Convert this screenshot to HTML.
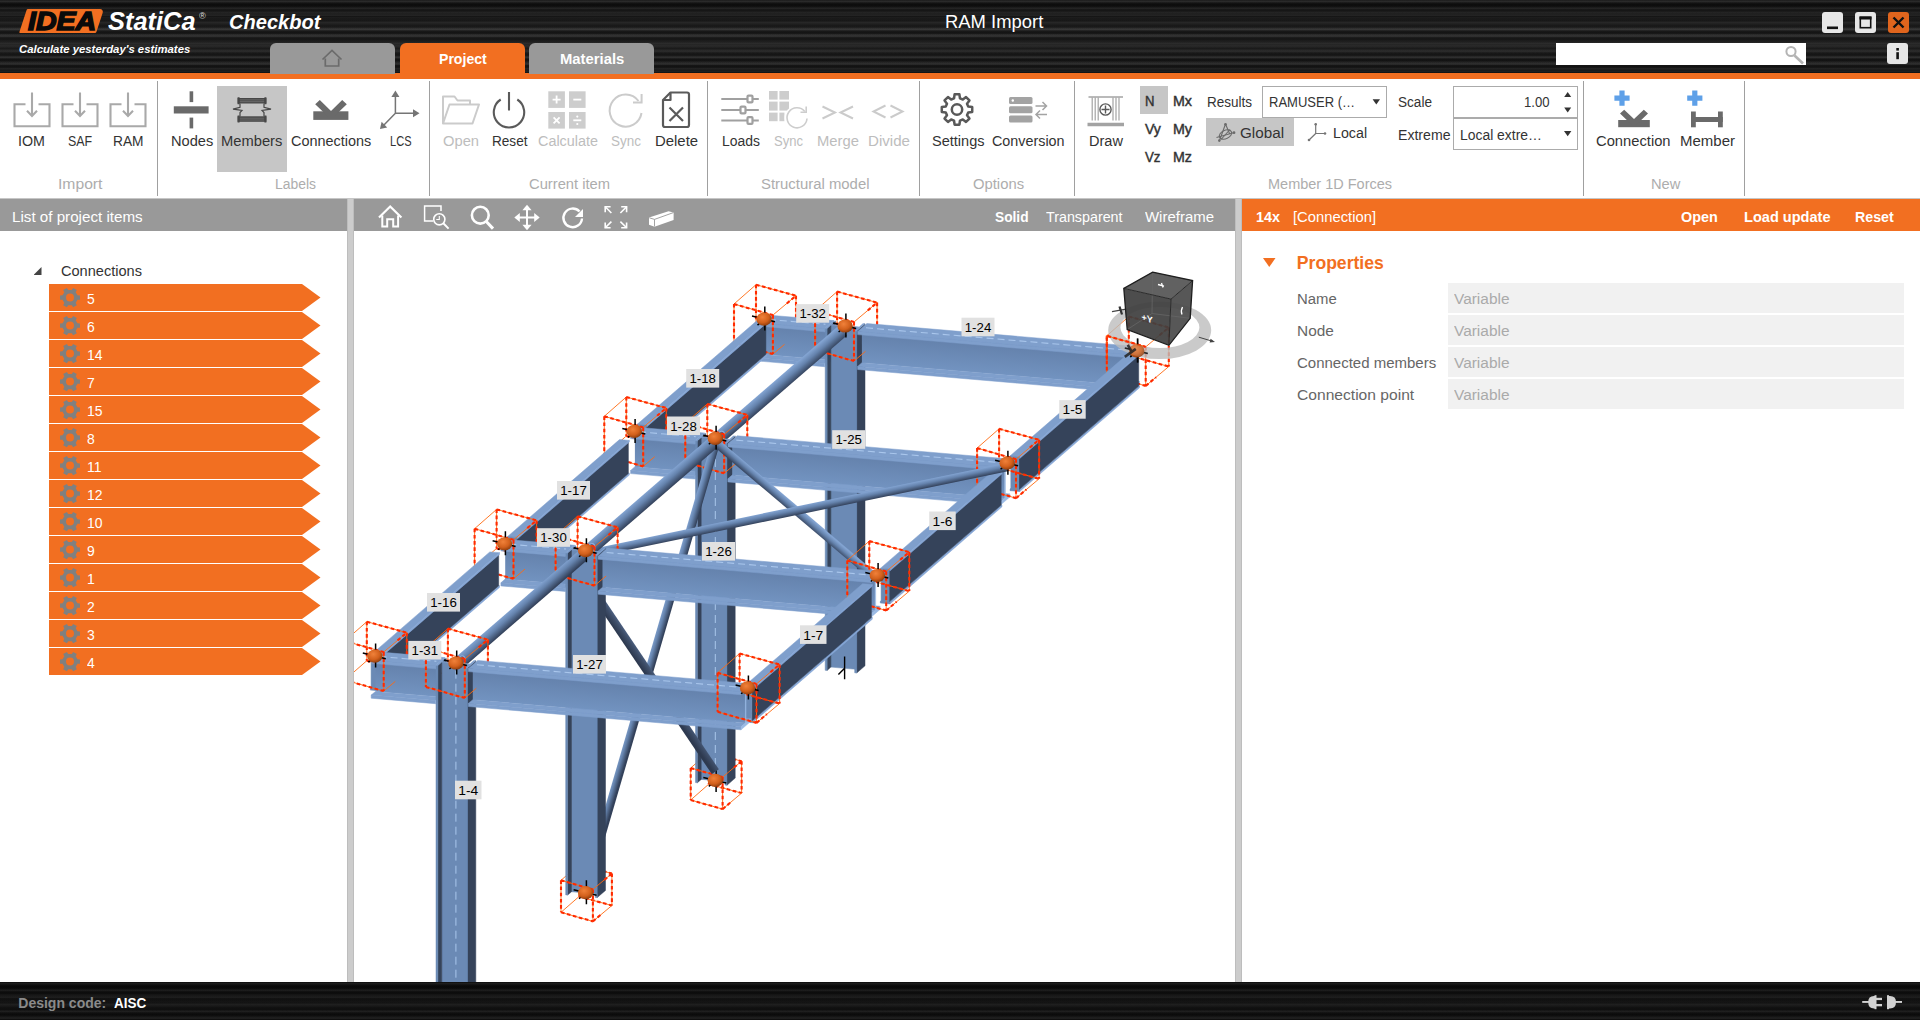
<!DOCTYPE html>
<html lang="en"><head><meta charset="utf-8"><title>RAM Import - IDEA StatiCa Checkbot</title>
<style>
*{margin:0;padding:0;box-sizing:border-box}
html,body{width:1920px;height:1020px;overflow:hidden;background:#fff}
body{font-family:"Liberation Sans",sans-serif;position:relative}
.t{position:absolute;white-space:nowrap;line-height:1;transform-origin:0 50%;display:block}
.a{position:absolute}
#title{left:0;top:0;width:1920px;height:73px;background:#101010;
 background-image:repeating-linear-gradient(180deg,rgba(255,255,255,0) 0,rgba(255,255,255,.075) 1.2px,rgba(255,255,255,0) 2.6px,rgba(0,0,0,.25) 4px,rgba(255,255,255,0) 7px),
 repeating-linear-gradient(180deg,rgba(255,255,255,0) 0,rgba(255,255,255,.06) 2px,rgba(255,255,255,0) 5px,rgba(255,255,255,.03) 8px,rgba(255,255,255,0) 11px),
 repeating-linear-gradient(180deg,rgba(255,255,255,.05) 0,rgba(255,255,255,0) 3px,rgba(255,255,255,0) 9px,rgba(255,255,255,.07) 12px,rgba(255,255,255,0) 14px,rgba(255,255,255,0) 17px),
 linear-gradient(180deg,#0c0c0c 0,#181818 35%,#1a1a1a 65%,#101010 100%)}
#stripe{left:0;top:73px;width:1920px;height:6px;background:#F26F21}
#ribbon{left:0;top:79px;width:1920px;height:120px;background:#fff;border-bottom:1px solid #c6c6c6}
.sep{position:absolute;top:81px;height:115px;width:1px;background:#a0a0a0}
.tab{position:absolute;top:43px;height:31px;width:125px;border-radius:6px 6px 0 0;background:#999}
.wb{position:absolute;width:21px;height:21px;border-radius:3px;background:#e6e6e6}
.hl{position:absolute;background:#c6c6c6}
.box{position:absolute;background:#fff;border:1px solid #ababab}
.hdr{position:absolute;top:199.4px;height:31.3px;background:#999}
.split{position:absolute;top:199px;width:7px;height:784px;background:#ccc;border-left:1px solid #bdbdbd;border-right:1px solid #bdbdbd}
#status{left:0;top:982px;width:1920px;height:38px;background:#0d0d0d;
 background-image:repeating-linear-gradient(180deg,rgba(255,255,255,0) 0,rgba(255,255,255,.06) 1.2px,rgba(255,255,255,0) 2.6px,rgba(0,0,0,.25) 4px,rgba(255,255,255,0) 7px),
 repeating-linear-gradient(180deg,rgba(255,255,255,0) 0,rgba(255,255,255,.05) 2px,rgba(255,255,255,0) 5px,rgba(255,255,255,.025) 8px,rgba(255,255,255,0) 11px),
 linear-gradient(180deg,#080808 0,#121212 50%,#0c0c0c 100%)}
.fld{position:absolute;left:1448px;width:456px;height:30px;background:#f1f1f1}
.row{position:absolute;left:49px;width:272px;height:27px;background:#F26F21;clip-path:polygon(0 0,253px 0,271.5px 13.5px,253px 27px,0 27px)}
</style></head>
<body>
<div id="title" class="a"></div><div id="stripe" class="a"></div><div id="ribbon" class="a"></div>
<div class="tab" style="left:270px"></div><div class="tab" style="left:400px;background:#F26F21"></div><div class="tab" style="left:529px"></div>
<div class="a" style="left:23.4px;top:9.4px;width:76.5px;height:24px;background:#F26F21;transform:skewX(-18.2deg);border-radius:1px 4px 1px 1px"></div>
<span class="t" style="left:28.20px;top:8.47px;font-size:26.5px;color:#0a0a0a;font-weight:700;font-style:italic;transform:scaleX(1.0777);-webkit-text-stroke:1.5px #0a0a0a;">IDEA</span>
<span class="t" style="left:107.50px;top:9.44px;font-size:25px;color:#fff;font-weight:700;font-style:italic;transform:scaleX(1.0160);">StatiCa</span>
<span class="t" style="left:198.80px;top:11.68px;font-size:9px;color:#ddd;transform:scaleX(1.0264);">®</span>
<span class="t" style="left:228.75px;top:11.82px;font-size:20px;color:#fff;font-weight:700;font-style:italic;transform:scaleX(1.0041);">Checkbot</span>
<span class="t" style="left:18.75px;top:43.76px;font-size:11.8px;color:#fff;font-weight:700;font-style:italic;transform:scaleX(0.9628);">Calculate yesterday's estimates</span>
<span class="t" style="left:945.40px;top:14.30px;font-size:17.6px;color:#fff;transform:scaleX(1.0482);">RAM Import</span>
<span class="t" style="left:438.75px;top:51.05px;font-size:15px;color:#fff;font-weight:700;transform:scaleX(0.9386);">Project</span>
<span class="t" style="left:559.50px;top:51.05px;font-size:15px;color:#fff;font-weight:700;transform:scaleX(0.9885);">Materials</span>
<div class="wb" style="left:1822px;top:12px"></div><div class="wb" style="left:1855px;top:12px"></div><div class="wb" style="left:1888px;top:12px;background:#E0651D"></div><div class="wb" style="left:1887px;top:43px"></div>
<div class="a" style="left:1556px;top:43px;width:250px;height:22px;background:#fff"></div>
<div class="sep" style="left:157px"></div>
<div class="sep" style="left:429px"></div>
<div class="sep" style="left:707px"></div>
<div class="sep" style="left:919px"></div>
<div class="sep" style="left:1074px"></div>
<div class="sep" style="left:1583px"></div>
<div class="sep" style="left:1744px"></div>
<div class="hl" style="left:217px;top:86px;width:70px;height:86px"></div>
<div class="hl" style="left:1140px;top:86px;width:28px;height:28px"></div>
<div class="hl" style="left:1206px;top:118px;width:88px;height:28px"></div>
<div class="box" style="left:1262px;top:86px;width:125px;height:32px"></div>
<div class="box" style="left:1453px;top:86px;width:125px;height:32px"></div>
<div class="box" style="left:1453px;top:118px;width:125px;height:32px"></div>
<span class="t" style="left:18.40px;top:132.88px;font-size:15.5px;color:#333;transform:scaleX(0.9197);">IOM</span>
<span class="t" style="left:68.40px;top:132.88px;font-size:15.5px;color:#333;transform:scaleX(0.8000);">SAF</span>
<span class="t" style="left:112.50px;top:132.88px;font-size:15.5px;color:#333;transform:scaleX(0.8870);">RAM</span>
<span class="t" style="left:170.60px;top:132.88px;font-size:15.5px;color:#333;transform:scaleX(0.9430);">Nodes</span>
<span class="t" style="left:221.40px;top:132.88px;font-size:15.5px;color:#333;transform:scaleX(0.9501);">Members</span>
<span class="t" style="left:291.40px;top:132.88px;font-size:15.5px;color:#333;transform:scaleX(0.9312);">Connections</span>
<span class="t" style="left:389.50px;top:132.88px;font-size:15.5px;color:#333;transform:scaleX(0.7137);">LCS</span>
<span class="t" style="left:443.00px;top:132.88px;font-size:15.5px;color:#bdbdbd;transform:scaleX(0.9505);">Open</span>
<span class="t" style="left:491.50px;top:132.88px;font-size:15.5px;color:#333;transform:scaleX(0.8765);">Reset</span>
<span class="t" style="left:537.50px;top:132.88px;font-size:15.5px;color:#bdbdbd;transform:scaleX(0.9284);">Calculate</span>
<span class="t" style="left:611.00px;top:132.88px;font-size:15.5px;color:#bdbdbd;transform:scaleX(0.8696);">Sync</span>
<span class="t" style="left:654.50px;top:132.88px;font-size:15.5px;color:#333;transform:scaleX(0.9609);">Delete</span>
<span class="t" style="left:721.50px;top:132.88px;font-size:15.5px;color:#333;transform:scaleX(0.8994);">Loads</span>
<span class="t" style="left:773.50px;top:132.88px;font-size:15.5px;color:#bdbdbd;transform:scaleX(0.8406);">Sync</span>
<span class="t" style="left:816.50px;top:132.88px;font-size:15.5px;color:#bdbdbd;transform:scaleX(0.9545);">Merge</span>
<span class="t" style="left:867.50px;top:132.88px;font-size:15.5px;color:#bdbdbd;transform:scaleX(0.9739);">Divide</span>
<span class="t" style="left:931.50px;top:132.88px;font-size:15.5px;color:#333;transform:scaleX(0.9375);">Settings</span>
<span class="t" style="left:992.00px;top:132.88px;font-size:15.5px;color:#333;transform:scaleX(0.9250);">Conversion</span>
<span class="t" style="left:1089.00px;top:132.88px;font-size:15.5px;color:#333;transform:scaleX(0.9379);">Draw</span>
<span class="t" style="left:1596.00px;top:132.88px;font-size:15.5px;color:#333;transform:scaleX(0.9506);">Connection</span>
<span class="t" style="left:1680.00px;top:132.88px;font-size:15.5px;color:#333;transform:scaleX(0.9670);">Member</span>
<span class="t" style="left:57.50px;top:175.88px;font-size:15.5px;color:#adadad;transform:scaleX(1.0120);">Import</span>
<span class="t" style="left:274.70px;top:175.88px;font-size:15.5px;color:#adadad;transform:scaleX(0.8964);">Labels</span>
<span class="t" style="left:528.50px;top:175.88px;font-size:15.5px;color:#adadad;transform:scaleX(0.9501);">Current item</span>
<span class="t" style="left:760.50px;top:175.88px;font-size:15.5px;color:#adadad;transform:scaleX(0.9612);">Structural model</span>
<span class="t" style="left:972.50px;top:175.88px;font-size:15.5px;color:#adadad;transform:scaleX(0.9555);">Options</span>
<span class="t" style="left:1267.50px;top:175.88px;font-size:15.5px;color:#adadad;transform:scaleX(0.9350);">Member 1D Forces</span>
<span class="t" style="left:1650.50px;top:175.88px;font-size:15.5px;color:#adadad;transform:scaleX(0.9478);">New</span>
<span class="t" style="left:1144.50px;top:93.13px;font-size:15.2px;color:#333;transform:scaleX(0.8636);-webkit-text-stroke:.45px #333;">N</span>
<span class="t" style="left:1173.00px;top:93.13px;font-size:15.2px;color:#333;transform:scaleX(0.9383);-webkit-text-stroke:.45px #333;">Mx</span>
<span class="t" style="left:1144.50px;top:121.13px;font-size:15.2px;color:#333;transform:scaleX(0.9275);-webkit-text-stroke:.45px #333;">Vy</span>
<span class="t" style="left:1173.00px;top:121.13px;font-size:15.2px;color:#333;transform:scaleX(0.9383);-webkit-text-stroke:.45px #333;">My</span>
<span class="t" style="left:1144.50px;top:149.13px;font-size:15.2px;color:#333;transform:scaleX(0.8732);-webkit-text-stroke:.45px #333;">Vz</span>
<span class="t" style="left:1173.00px;top:149.13px;font-size:15.2px;color:#333;transform:scaleX(0.9383);-webkit-text-stroke:.45px #333;">Mz</span>
<span class="t" style="left:1206.50px;top:94.38px;font-size:15.5px;color:#333;transform:scaleX(0.8717);">Results</span>
<span class="t" style="left:1268.50px;top:94.38px;font-size:15.5px;color:#333;transform:scaleX(0.8390);">RAMUSER (…</span>
<span class="t" style="left:1397.50px;top:94.38px;font-size:15.5px;color:#333;transform:scaleX(0.8774);">Scale</span>
<span class="t" style="left:1523.50px;top:94.38px;font-size:15.5px;color:#333;transform:scaleX(0.8465);">1.00</span>
<span class="t" style="left:1240.00px;top:124.88px;font-size:15.5px;color:#333;transform:scaleX(0.9832);">Global</span>
<span class="t" style="left:1332.50px;top:124.88px;font-size:15.5px;color:#333;transform:scaleX(0.9189);">Local</span>
<span class="t" style="left:1397.50px;top:126.88px;font-size:15.5px;color:#333;transform:scaleX(0.9091);">Extreme</span>
<span class="t" style="left:1459.50px;top:126.88px;font-size:15.5px;color:#333;transform:scaleX(0.8974);">Local extre…</span>
<div class="hdr" style="left:0;width:347px"></div><div class="hdr" style="left:354px;width:881px"></div>
<div class="hdr" style="left:1242px;width:678px;background:#F26F21"></div>
<div class="split" style="left:347px"></div><div class="split" style="left:1235px"></div>
<span class="t" style="left:12.40px;top:208.88px;font-size:15.5px;color:#fff;transform:scaleX(0.9783);">List of project items</span>
<span class="t" style="left:995.00px;top:209.30px;font-size:15px;color:#fff;font-weight:700;transform:scaleX(0.9147);">Solid</span>
<span class="t" style="left:1045.50px;top:208.88px;font-size:15.5px;color:#fff;transform:scaleX(0.9217);">Transparent</span>
<span class="t" style="left:1144.50px;top:208.88px;font-size:15.5px;color:#fff;transform:scaleX(0.9650);">Wireframe</span>
<span class="t" style="left:1255.50px;top:209.30px;font-size:15px;color:#fff;font-weight:700;transform:scaleX(0.9600);">14x</span>
<span class="t" style="left:1293.00px;top:208.88px;font-size:15.5px;color:#fff;transform:scaleX(0.9540);">[Connection]</span>
<span class="t" style="left:1680.80px;top:209.30px;font-size:15px;color:#fff;font-weight:700;transform:scaleX(0.9590);">Open</span>
<span class="t" style="left:1743.50px;top:209.30px;font-size:15px;color:#fff;font-weight:700;transform:scaleX(0.9705);">Load update</span>
<span class="t" style="left:1855.00px;top:209.30px;font-size:15px;color:#fff;font-weight:700;transform:scaleX(0.9468);">Reset</span>
<span class="t" style="left:60.90px;top:262.88px;font-size:15.5px;color:#333;transform:scaleX(0.9393);">Connections</span>
<div class="a" style="left:33.5px;top:267px;width:8px;height:8px;background:#444;clip-path:polygon(100% 0,100% 100%,0 100%)"></div>
<div class="row" style="top:284px"></div>
<span class="t" style="left:86.50px;top:290.68px;font-size:15.5px;color:#fff;transform:scaleX(.9);">5</span>
<div class="row" style="top:312px"></div>
<span class="t" style="left:86.50px;top:318.68px;font-size:15.5px;color:#fff;transform:scaleX(.9);">6</span>
<div class="row" style="top:340px"></div>
<span class="t" style="left:86.50px;top:346.68px;font-size:15.5px;color:#fff;transform:scaleX(.9);">14</span>
<div class="row" style="top:368px"></div>
<span class="t" style="left:86.50px;top:374.68px;font-size:15.5px;color:#fff;transform:scaleX(.9);">7</span>
<div class="row" style="top:396px"></div>
<span class="t" style="left:86.50px;top:402.68px;font-size:15.5px;color:#fff;transform:scaleX(.9);">15</span>
<div class="row" style="top:424px"></div>
<span class="t" style="left:86.50px;top:430.68px;font-size:15.5px;color:#fff;transform:scaleX(.9);">8</span>
<div class="row" style="top:452px"></div>
<span class="t" style="left:86.50px;top:458.68px;font-size:15.5px;color:#fff;transform:scaleX(.9);">11</span>
<div class="row" style="top:480px"></div>
<span class="t" style="left:86.50px;top:486.68px;font-size:15.5px;color:#fff;transform:scaleX(.9);">12</span>
<div class="row" style="top:508px"></div>
<span class="t" style="left:86.50px;top:514.68px;font-size:15.5px;color:#fff;transform:scaleX(.9);">10</span>
<div class="row" style="top:536px"></div>
<span class="t" style="left:86.50px;top:542.68px;font-size:15.5px;color:#fff;transform:scaleX(.9);">9</span>
<div class="row" style="top:564px"></div>
<span class="t" style="left:86.50px;top:570.68px;font-size:15.5px;color:#fff;transform:scaleX(.9);">1</span>
<div class="row" style="top:592px"></div>
<span class="t" style="left:86.50px;top:598.68px;font-size:15.5px;color:#fff;transform:scaleX(.9);">2</span>
<div class="row" style="top:620px"></div>
<span class="t" style="left:86.50px;top:626.68px;font-size:15.5px;color:#fff;transform:scaleX(.9);">3</span>
<div class="row" style="top:648px"></div>
<span class="t" style="left:86.50px;top:654.68px;font-size:15.5px;color:#fff;transform:scaleX(.9);">4</span>
<span class="t" style="left:1296.80px;top:255.10px;font-size:17.6px;color:#F26F21;font-weight:700;">Properties</span>
<div class="a" style="left:1263px;top:258px;width:12.5px;height:9px;background:#F26F21;clip-path:polygon(0 0,100% 0,50% 100%)"></div>
<div class="fld" style="top:283px"></div>
<span class="t" style="left:1296.80px;top:290.88px;font-size:15.5px;color:#666;transform:scaleX(0.9595);">Name</span>
<span class="t" style="left:1454.30px;top:290.88px;font-size:15.5px;color:#aaa;transform:scaleX(0.9955);">Variable</span>
<div class="fld" style="top:315px"></div>
<span class="t" style="left:1296.80px;top:322.88px;font-size:15.5px;color:#666;transform:scaleX(0.9946);">Node</span>
<span class="t" style="left:1454.30px;top:322.88px;font-size:15.5px;color:#aaa;transform:scaleX(0.9955);">Variable</span>
<div class="fld" style="top:347px"></div>
<span class="t" style="left:1296.80px;top:354.88px;font-size:15.5px;color:#666;transform:scaleX(0.9675);">Connected members</span>
<span class="t" style="left:1454.30px;top:354.88px;font-size:15.5px;color:#aaa;transform:scaleX(0.9955);">Variable</span>
<div class="fld" style="top:379px"></div>
<span class="t" style="left:1296.80px;top:386.88px;font-size:15.5px;color:#666;transform:scaleX(1.0071);">Connection point</span>
<span class="t" style="left:1454.30px;top:386.88px;font-size:15.5px;color:#aaa;transform:scaleX(0.9955);">Variable</span>
<div id="status" class="a"></div>
<span class="t" style="left:18.30px;top:995.65px;font-size:14px;color:#8a8a8a;font-weight:700;">Design code:</span>
<span class="t" style="left:113.50px;top:995.65px;font-size:14px;color:#fff;font-weight:700;transform:scaleX(0.9642);">AISC</span>
<svg class="a" style="left:0;top:0" width="1920" height="1020" viewBox="0 0 1920 1020" font-family="Liberation Sans, sans-serif"><defs><radialGradient id="sph" cx=".4" cy=".35" r=".75"><stop offset="0" stop-color="#F0813A"/><stop offset=".55" stop-color="#D2601C"/><stop offset="1" stop-color="#7A3208"/></radialGradient><linearGradient id="fg1" gradientUnits="userSpaceOnUse" x1="764.7" y1="354.4" x2="767.4" y2="322.8"><stop offset="0" stop-color="#7293C0"/><stop offset="1" stop-color="#6380AA"/></linearGradient><linearGradient id="fg2" gradientUnits="userSpaceOnUse" x1="861.9" y1="362.7" x2="864.6" y2="331.0"><stop offset="0" stop-color="#7293C0"/><stop offset="1" stop-color="#6380AA"/></linearGradient><linearGradient id="tg3" gradientUnits="userSpaceOnUse" x1="716.3" y1="431.6" x2="724.6" y2="441.3"><stop offset="0" stop-color="#82A3D1"/><stop offset=".42" stop-color="#6583AD"/><stop offset="1" stop-color="#33415A"/></linearGradient><linearGradient id="fg4" gradientUnits="userSpaceOnUse" x1="634.9" y1="466.7" x2="637.6" y2="435.1"><stop offset="0" stop-color="#7293C0"/><stop offset="1" stop-color="#6380AA"/></linearGradient><linearGradient id="fg5" gradientUnits="userSpaceOnUse" x1="732.2" y1="475.0" x2="734.9" y2="443.4"><stop offset="0" stop-color="#7293C0"/><stop offset="1" stop-color="#6380AA"/></linearGradient><linearGradient id="tg6" gradientUnits="userSpaceOnUse" x1="711.3" y1="442.9" x2="719.4" y2="445.3"><stop offset="0" stop-color="#82A3D1"/><stop offset=".42" stop-color="#6583AD"/><stop offset="1" stop-color="#33415A"/></linearGradient><linearGradient id="tg7" gradientUnits="userSpaceOnUse" x1="589.2" y1="577.1" x2="582.1" y2="582.0"><stop offset="0" stop-color="#4E6283"/><stop offset=".42" stop-color="#3E4E69"/><stop offset="1" stop-color="#2E3A50"/></linearGradient><linearGradient id="tg8" gradientUnits="userSpaceOnUse" x1="718.1" y1="439.0" x2="712.6" y2="445.4"><stop offset="0" stop-color="#82A3D1"/><stop offset=".42" stop-color="#6583AD"/><stop offset="1" stop-color="#33415A"/></linearGradient><linearGradient id="tg9" gradientUnits="userSpaceOnUse" x1="584.8" y1="550.4" x2="586.5" y2="558.6"><stop offset="0" stop-color="#82A3D1"/><stop offset=".42" stop-color="#6583AD"/><stop offset="1" stop-color="#33415A"/></linearGradient><linearGradient id="tg10" gradientUnits="userSpaceOnUse" x1="586.5" y1="543.9" x2="594.9" y2="553.6"><stop offset="0" stop-color="#82A3D1"/><stop offset=".42" stop-color="#6583AD"/><stop offset="1" stop-color="#33415A"/></linearGradient><linearGradient id="fg11" gradientUnits="userSpaceOnUse" x1="505.2" y1="579.0" x2="507.9" y2="547.4"><stop offset="0" stop-color="#7293C0"/><stop offset="1" stop-color="#6380AA"/></linearGradient><linearGradient id="fg12" gradientUnits="userSpaceOnUse" x1="602.5" y1="587.3" x2="605.2" y2="555.7"><stop offset="0" stop-color="#7293C0"/><stop offset="1" stop-color="#6380AA"/></linearGradient><linearGradient id="tg13" gradientUnits="userSpaceOnUse" x1="456.8" y1="656.3" x2="465.2" y2="665.9"><stop offset="0" stop-color="#82A3D1"/><stop offset=".42" stop-color="#6583AD"/><stop offset="1" stop-color="#33415A"/></linearGradient><linearGradient id="fg14" gradientUnits="userSpaceOnUse" x1="375.5" y1="691.4" x2="378.2" y2="659.7"><stop offset="0" stop-color="#7293C0"/><stop offset="1" stop-color="#6380AA"/></linearGradient><linearGradient id="fg15" gradientUnits="userSpaceOnUse" x1="472.8" y1="699.7" x2="475.5" y2="668.0"><stop offset="0" stop-color="#7293C0"/><stop offset="1" stop-color="#6380AA"/></linearGradient><linearGradient id="webg" x1="0" y1="0" x2="1" y2=".35"><stop offset="0" stop-color="#6C8BB7"/><stop offset=".35" stop-color="#7091BE"/><stop offset="1" stop-color="#6482AC"/></linearGradient><clipPath id="vp"><rect x="354" y="231" width="881" height="751"/></clipPath></defs><g clip-path="url(#vp)"><path d="M756.0 284.7L734.0 304.0M756.0 284.7L796.0 295.7M756.0 284.7L756.0 323.7M756.0 323.7L734.0 343.0M756.0 323.7L796.0 334.7M796.0 295.7L796.0 334.7" stroke="#FF6A10" stroke-width=".9" fill="none"/>
<path d="M756.0 284.7L796.0 295.7M756.0 284.7L756.0 323.7M756.0 323.7L796.0 334.7M796.0 295.7L796.0 334.7" stroke="#FF2A00" stroke-width="2.1" stroke-dasharray="3.6 2.6" fill="none"/>
<path d="M837.1 291.6L815.1 310.9M837.1 291.6L877.1 302.6M837.1 291.6L837.1 330.6M837.1 330.6L815.1 349.9M837.1 330.6L877.1 341.6M877.1 302.6L877.1 341.6" stroke="#FF6A10" stroke-width=".9" fill="none"/>
<path d="M837.1 291.6L877.1 302.6M837.1 291.6L837.1 330.6M837.1 330.6L877.1 341.6M877.1 302.6L877.1 341.6" stroke="#FF2A00" stroke-width="2.1" stroke-dasharray="3.6 2.6" fill="none"/>
<path d="M1128.8 316.5L1106.8 335.8M1128.8 316.5L1168.8 327.5M1128.8 316.5L1128.8 355.5M1128.8 355.5L1106.8 374.8M1128.8 355.5L1168.8 366.5" stroke="#FF6A10" stroke-width=".9" fill="none"/>
<path d="M1128.8 316.5L1168.8 327.5M1128.8 316.5L1128.8 355.5M1128.8 355.5L1168.8 366.5" stroke="#FF2A00" stroke-width="2.1" stroke-dasharray="3.6 2.6" fill="none"/>
<polygon points="765.3,353.9 769.6,350.1 834.0,355.6 829.6,359.4" fill="#7F9FCC" stroke="#7F9FCC" stroke-width=".5"/>
<polygon points="764.7,354.4 764.7,322.5 829.0,328.0 829.0,359.9" fill="url(#fg1)"/>
<polygon points="760.3,358.2 764.7,354.4 829.0,359.9 824.7,363.6" fill="#7F9FCC" stroke="#7F9FCC" stroke-width=".5"/>
<polygon points="760.3,323.2 769.6,315.2 834.0,320.6 824.7,328.7" fill="#7F9FCC" stroke="#7F9FCC" stroke-width=".5"/>
<polygon points="760.3,361.2 760.3,358.2 824.7,363.6 824.7,366.7" fill="#7F9FCC" stroke="#7F9FCC" stroke-width=".5"/>
<polygon points="834.0,358.7 824.7,366.7 824.7,363.6 829.0,359.9 829.0,328.0 824.7,331.8 824.7,328.7 834.0,320.6 834.0,323.7 829.6,327.5 829.6,359.4 834.0,355.6" fill="#9BBAE4" stroke="#9BBAE4" stroke-width=".5"/>
<polygon points="760.3,326.3 760.3,323.2 824.7,328.7 824.7,331.8" fill="#7F9FCC" stroke="#7F9FCC" stroke-width=".5"/>
<line x1="768.8" y1="319.5" x2="825.5" y2="324.3" stroke="#A9C6EC" stroke-width="1.1" stroke-dasharray="7 4"/>
<polygon points="835.4,663.3 831.5,666.6 831.5,324.6 835.4,321.2" fill="#35435A" stroke="#35435A" stroke-width=".5"/>
<polygon points="858.6,669.5 830.9,667.1 830.9,325.1 858.6,327.5" fill="#6B8AB5" stroke="#6B8AB5" stroke-width=".5"/>
<polygon points="830.9,667.1 827.1,670.4 827.1,328.4 830.9,325.1" fill="#35435A" stroke="#35435A" stroke-width=".5"/>
<polygon points="865.0,665.8 856.7,673.0 856.7,331.0 865.0,323.8" fill="#35435A" stroke="#35435A" stroke-width=".5"/>
<polygon points="827.1,670.4 825.2,670.3 825.2,328.3 827.1,328.4" fill="#6B8AB5" stroke="#6B8AB5" stroke-width=".5"/>
<polygon points="856.7,673.0 854.7,672.8 854.7,330.8 856.7,331.0" fill="#6B8AB5" stroke="#6B8AB5" stroke-width=".5"/>
<polygon points="825.2,328.3 833.5,321.1 835.4,321.2 831.5,324.6 859.2,326.9 863.0,323.6 865.0,323.8 856.7,331.0 854.7,330.8 858.6,327.5 830.9,325.1 827.1,328.4" fill="#7F9FCC" stroke="#7F9FCC" stroke-width=".5"/>
<polygon points="862.5,362.2 866.9,358.4 1139.5,381.6 1135.2,385.4" fill="#7F9FCC" stroke="#7F9FCC" stroke-width=".5"/>
<polygon points="861.9,362.7 861.9,330.8 1134.6,354.1 1134.6,385.9" fill="url(#fg2)"/>
<polygon points="857.6,366.4 861.9,362.7 1134.6,385.9 1130.2,389.7" fill="#7F9FCC" stroke="#7F9FCC" stroke-width=".5"/>
<polygon points="857.6,331.5 866.9,323.5 1139.5,346.7 1130.2,354.7" fill="#7F9FCC" stroke="#7F9FCC" stroke-width=".5"/>
<polygon points="857.6,369.5 857.6,366.4 1130.2,389.7 1130.2,392.8" fill="#7F9FCC" stroke="#7F9FCC" stroke-width=".5"/>
<polygon points="857.6,334.6 857.6,331.5 1130.2,354.7 1130.2,357.8" fill="#7F9FCC" stroke="#7F9FCC" stroke-width=".5"/>
<polygon points="1139.5,384.7 1130.2,392.8 1130.2,389.7 1134.6,385.9 1134.6,354.1 1130.2,357.8 1130.2,354.7 1139.5,346.7 1139.5,349.8 1135.2,353.5 1135.2,385.4 1139.5,381.6" fill="#9BBAE4" stroke="#9BBAE4" stroke-width=".5"/>
<line x1="866.0" y1="327.8" x2="1131.1" y2="350.4" stroke="#A9C6EC" stroke-width="1.1" stroke-dasharray="7 4"/>
<path d="M734.0 304.0L772.9 315.1M772.9 315.1L796.0 295.7M734.0 304.0L734.0 343.0M772.9 315.1L772.9 354.1M734.0 343.0L772.9 354.1M772.9 354.1L784.5 344.4" stroke="#FF6A10" stroke-width=".9" fill="none"/>
<path d="M734.0 304.0L772.9 315.1M734.0 304.0L734.0 343.0M772.9 315.1L772.9 354.1M734.0 343.0L772.9 354.1M786.8 303.5L796.0 295.7" stroke="#FF2A00" stroke-width="2.1" stroke-dasharray="3.6 2.6" fill="none"/>
<path d="M815.1 310.9L854.0 322.0M854.0 322.0L877.1 302.6M815.1 310.9L815.1 349.9M854.0 322.0L854.0 361.0M815.1 349.9L854.0 361.0M854.0 361.0L865.5 351.3" stroke="#FF6A10" stroke-width=".9" fill="none"/>
<path d="M815.1 310.9L854.0 322.0M815.1 310.9L815.1 349.9M854.0 322.0L854.0 361.0M815.1 349.9L854.0 361.0M867.8 310.4L877.1 302.6" stroke="#FF2A00" stroke-width="2.1" stroke-dasharray="3.6 2.6" fill="none"/>
<path d="M1106.8 335.8L1145.7 346.9M1145.7 346.9L1168.8 327.5M1106.8 335.8L1106.8 374.8M1145.7 346.9L1145.7 385.9M1106.8 374.8L1145.7 385.9M1145.7 385.9L1168.8 366.5M1168.8 327.5L1168.8 366.5" stroke="#FF6A10" stroke-width=".9" fill="none"/>
<path d="M1106.8 335.8L1145.7 346.9M1106.8 335.8L1106.8 374.8M1145.7 346.9L1145.7 385.9M1106.8 374.8L1145.7 385.9M1168.8 327.5L1168.8 366.5M1159.5 335.2L1168.8 327.5M1145.7 385.9L1156.1 377.2" stroke="#FF2A00" stroke-width="2.1" stroke-dasharray="3.6 2.6" fill="none"/>
<path d="M844.6 656.5V679.2M838.4 674.5L844.6 668.2" stroke="#000" stroke-width="1.4" fill="none"/>
<polygon points="638.1,457.4 637.2,457.3 757.1,353.5 757.9,353.6" fill="#7F9FCC" stroke="#7F9FCC" stroke-width=".5"/>
<polygon points="646.9,459.8 646.9,458.1 766.8,354.4 766.8,356.0" fill="#86A7D6" stroke="#86A7D6" stroke-width=".5"/>
<polygon points="646.9,458.1 646.1,458.0 765.9,354.3 766.8,354.4" fill="#7F9FCC" stroke="#7F9FCC" stroke-width=".5"/>
<polygon points="646.1,458.0 646.1,426.7 765.9,322.9 765.9,354.3" fill="#35435A" stroke="#35435A" stroke-width=".5"/>
<polygon points="646.9,425.1 637.2,424.3 757.1,320.5 766.8,321.3" fill="#7F9FCC" stroke="#7F9FCC" stroke-width=".5"/>
<polygon points="646.9,426.7 646.9,425.1 766.8,321.3 766.8,323.0" fill="#86A7D6" stroke="#86A7D6" stroke-width=".5"/>
<polygon points="637.2,458.9 646.9,459.8 646.9,458.1 646.1,458.0 646.1,426.7 646.9,426.7 646.9,425.1 637.2,424.3 637.2,425.9 638.1,426.0 638.1,457.4 637.2,457.3" fill="#6B8AB5" stroke="#6B8AB5" stroke-width=".5"/>
<polygon points="1010.8,489.1 1010.0,489.1 1129.8,385.3 1130.7,385.4" fill="#7F9FCC" stroke="#7F9FCC" stroke-width=".5"/>
<polygon points="1019.7,491.5 1019.7,489.9 1139.5,386.1 1139.5,387.8" fill="#86A7D6" stroke="#86A7D6" stroke-width=".5"/>
<polygon points="1019.7,489.9 1018.9,489.8 1138.7,386.1 1139.5,386.1" fill="#7F9FCC" stroke="#7F9FCC" stroke-width=".5"/>
<polygon points="1018.9,489.8 1018.9,458.4 1138.7,354.7 1138.7,386.1" fill="#35435A" stroke="#35435A" stroke-width=".5"/>
<polygon points="1019.7,456.9 1010.0,456.0 1129.8,352.3 1139.5,353.1" fill="#7F9FCC" stroke="#7F9FCC" stroke-width=".5"/>
<polygon points="1019.7,458.5 1019.7,456.9 1139.5,353.1 1139.5,354.8" fill="#86A7D6" stroke="#86A7D6" stroke-width=".5"/>
<polygon points="1010.0,490.7 1019.7,491.5 1019.7,489.9 1018.9,489.8 1018.9,458.4 1019.7,458.5 1019.7,456.9 1010.0,456.0 1010.0,457.7 1010.8,457.8 1010.8,489.1 1010.0,489.1" fill="#6B8AB5" stroke="#6B8AB5" stroke-width=".5"/>
<polygon points="716.3,431.6 838.5,325.8 846.9,335.4 724.6,441.3" fill="url(#tg3)"/>
<ellipse cx="720.4" cy="436.4" rx="3.6" ry="5.6" transform="rotate(28 720.4 436.4)" fill="#50658A" stroke="#8FB0DE" stroke-width="1.2"/>
<path d="M626.3 397.0L604.3 416.3M626.3 397.0L666.3 408.0M626.3 397.0L626.3 436.0M626.3 436.0L604.3 455.3M626.3 436.0L666.3 447.0M666.3 408.0L666.3 447.0" stroke="#FF6A10" stroke-width=".9" fill="none"/>
<path d="M626.3 397.0L666.3 408.0M626.3 397.0L626.3 436.0M626.3 436.0L666.3 447.0M666.3 408.0L666.3 447.0" stroke="#FF2A00" stroke-width="2.1" stroke-dasharray="3.6 2.6" fill="none"/>
<path d="M707.3 403.9L685.3 423.2M707.3 403.9L747.3 414.9M707.3 403.9L707.3 442.9M707.3 442.9L685.3 462.2M707.3 442.9L747.3 453.9M747.3 414.9L747.3 453.9" stroke="#FF6A10" stroke-width=".9" fill="none"/>
<path d="M707.3 403.9L747.3 414.9M707.3 403.9L707.3 442.9M707.3 442.9L747.3 453.9M747.3 414.9L747.3 453.9" stroke="#FF2A00" stroke-width="2.1" stroke-dasharray="3.6 2.6" fill="none"/>
<path d="M999.1 428.8L977.1 448.1M999.1 428.8L1039.1 439.8M999.1 428.8L999.1 467.8M999.1 467.8L977.1 487.1M999.1 467.8L1039.1 478.8" stroke="#FF6A10" stroke-width=".9" fill="none"/>
<path d="M999.1 428.8L1039.1 439.8M999.1 428.8L999.1 467.8M999.1 467.8L1039.1 478.8" stroke="#FF2A00" stroke-width="2.1" stroke-dasharray="3.6 2.6" fill="none"/>
<path d="M708.8 752.1L690.7 768.0M708.8 752.1L741.6 761.2M708.8 752.1L708.8 784.1M708.8 784.1L690.7 800.0M708.8 784.1L741.6 793.1" stroke="#FF6A10" stroke-width=".9" fill="none"/>
<path d="M708.8 752.1L741.6 761.2M708.8 752.1L708.8 784.1M708.8 784.1L741.6 793.1" stroke="#FF2A00" stroke-width="2.1" stroke-dasharray="3.6 2.6" fill="none"/>
<polygon points="635.5,466.2 639.9,462.4 704.3,467.9 699.9,471.7" fill="#7F9FCC" stroke="#7F9FCC" stroke-width=".5"/>
<polygon points="634.9,466.7 634.9,434.9 699.3,440.3 699.3,472.2" fill="url(#fg4)"/>
<polygon points="630.6,470.5 634.9,466.7 699.3,472.2 695.0,476.0" fill="#7F9FCC" stroke="#7F9FCC" stroke-width=".5"/>
<polygon points="630.6,435.5 639.9,427.5 704.3,433.0 695.0,441.0" fill="#7F9FCC" stroke="#7F9FCC" stroke-width=".5"/>
<polygon points="630.6,473.6 630.6,470.5 695.0,476.0 695.0,479.0" fill="#7F9FCC" stroke="#7F9FCC" stroke-width=".5"/>
<polygon points="704.3,471.0 695.0,479.0 695.0,476.0 699.3,472.2 699.3,440.3 695.0,444.1 695.0,441.0 704.3,433.0 704.3,436.1 699.9,439.8 699.9,471.7 704.3,467.9" fill="#9BBAE4" stroke="#9BBAE4" stroke-width=".5"/>
<polygon points="630.6,438.6 630.6,435.5 695.0,441.0 695.0,444.1" fill="#7F9FCC" stroke="#7F9FCC" stroke-width=".5"/>
<line x1="639.1" y1="431.8" x2="695.8" y2="436.7" stroke="#A9C6EC" stroke-width="1.1" stroke-dasharray="7 4"/>
<polygon points="705.7,775.6 701.8,778.9 701.8,436.9 705.7,433.6" fill="#35435A" stroke="#35435A" stroke-width=".5"/>
<polygon points="728.9,781.8 701.2,779.4 701.2,437.4 728.9,439.8" fill="#6B8AB5" stroke="#6B8AB5" stroke-width=".5"/>
<polygon points="701.2,779.4 697.4,782.8 697.4,440.8 701.2,437.4" fill="#35435A" stroke="#35435A" stroke-width=".5"/>
<polygon points="735.2,778.1 726.9,785.3 726.9,443.3 735.2,436.1" fill="#35435A" stroke="#35435A" stroke-width=".5"/>
<polygon points="697.4,782.8 695.5,782.6 695.5,440.6 697.4,440.8" fill="#6B8AB5" stroke="#6B8AB5" stroke-width=".5"/>
<polygon points="726.9,785.3 725.0,785.1 725.0,443.1 726.9,443.3" fill="#6B8AB5" stroke="#6B8AB5" stroke-width=".5"/>
<polygon points="695.5,440.6 703.8,433.4 705.7,433.6 701.8,436.9 729.5,439.3 733.3,435.9 735.2,436.1 726.9,443.3 725.0,443.1 728.9,439.8 701.2,437.4 697.4,440.8" fill="#7F9FCC" stroke="#7F9FCC" stroke-width=".5"/>
<line x1="715.3" y1="446.0" x2="715.3" y2="776.5" stroke="#A9C6EC" stroke-width="1.0" stroke-dasharray="8 5"/>
<polygon points="732.8,474.5 737.2,470.7 1009.8,494.0 1005.4,497.7" fill="#7F9FCC" stroke="#7F9FCC" stroke-width=".5"/>
<polygon points="732.2,475.0 732.2,443.1 1004.8,466.4 1004.8,498.3" fill="url(#fg5)"/>
<polygon points="727.9,478.8 732.2,475.0 1004.8,498.3 1000.5,502.0" fill="#7F9FCC" stroke="#7F9FCC" stroke-width=".5"/>
<polygon points="727.9,443.8 737.2,435.8 1009.8,459.0 1000.5,467.1" fill="#7F9FCC" stroke="#7F9FCC" stroke-width=".5"/>
<polygon points="727.9,481.9 727.9,478.8 1000.5,502.0 1000.5,505.1" fill="#7F9FCC" stroke="#7F9FCC" stroke-width=".5"/>
<polygon points="727.9,446.9 727.9,443.8 1000.5,467.1 1000.5,470.2" fill="#7F9FCC" stroke="#7F9FCC" stroke-width=".5"/>
<polygon points="1009.8,497.0 1000.5,505.1 1000.5,502.0 1004.8,498.3 1004.8,466.4 1000.5,470.2 1000.5,467.1 1009.8,459.0 1009.8,462.1 1005.4,465.9 1005.4,497.7 1009.8,494.0" fill="#9BBAE4" stroke="#9BBAE4" stroke-width=".5"/>
<line x1="736.3" y1="440.1" x2="1001.3" y2="462.7" stroke="#A9C6EC" stroke-width="1.1" stroke-dasharray="7 4"/>
<path d="M604.3 416.3L643.2 427.4M643.2 427.4L666.3 408.0M604.3 416.3L604.3 455.3M643.2 427.4L643.2 466.4M604.3 455.3L643.2 466.4M643.2 466.4L654.7 456.7" stroke="#FF6A10" stroke-width=".9" fill="none"/>
<path d="M604.3 416.3L643.2 427.4M604.3 416.3L604.3 455.3M643.2 427.4L643.2 466.4M604.3 455.3L643.2 466.4M657.1 415.8L666.3 408.0" stroke="#FF2A00" stroke-width="2.1" stroke-dasharray="3.6 2.6" fill="none"/>
<path d="M685.3 423.2L724.2 434.3M724.2 434.3L747.3 414.9M685.3 423.2L685.3 462.2M724.2 434.3L724.2 473.3M685.3 462.2L724.2 473.3M724.2 473.3L735.8 463.6" stroke="#FF6A10" stroke-width=".9" fill="none"/>
<path d="M685.3 423.2L724.2 434.3M685.3 423.2L685.3 462.2M724.2 434.3L724.2 473.3M685.3 462.2L724.2 473.3M738.1 422.7L747.3 414.9" stroke="#FF2A00" stroke-width="2.1" stroke-dasharray="3.6 2.6" fill="none"/>
<path d="M977.1 448.1L1016.0 459.2M1016.0 459.2L1039.1 439.8M977.1 448.1L977.1 487.1M1016.0 459.2L1016.0 498.2M977.1 487.1L1016.0 498.2M1016.0 498.2L1039.1 478.8M1039.1 439.8L1039.1 478.8" stroke="#FF6A10" stroke-width=".9" fill="none"/>
<path d="M977.1 448.1L1016.0 459.2M977.1 448.1L977.1 487.1M1016.0 459.2L1016.0 498.2M977.1 487.1L1016.0 498.2M1039.1 439.8L1039.1 478.8M1029.8 447.6L1039.1 439.8M1016.0 498.2L1026.3 489.5" stroke="#FF2A00" stroke-width="2.1" stroke-dasharray="3.6 2.6" fill="none"/>
<path d="M690.7 768.0L722.6 777.1M722.6 777.1L741.6 761.2M690.7 768.0L690.7 800.0M722.6 777.1L722.6 809.1M690.7 800.0L722.6 809.1M722.6 809.1L741.6 793.1M741.6 761.2L741.6 793.1" stroke="#FF6A10" stroke-width=".9" fill="none"/>
<path d="M690.7 768.0L722.6 777.1M690.7 768.0L690.7 800.0M722.6 777.1L722.6 809.1M690.7 800.0L722.6 809.1M741.6 761.2L741.6 793.1M734.0 767.5L741.6 761.2M722.6 809.1L731.2 801.9" stroke="#FF2A00" stroke-width="2.1" stroke-dasharray="3.6 2.6" fill="none"/>
<path d="M716.1 767.9V791.9M703.3 777.4L726.3 783.0M708.8 786.4L720.3 775.9" stroke="#000" stroke-width="1.5" fill="none"/>
<ellipse cx="715.3" cy="780.4" rx="7.7" ry="6.6" fill="url(#sph)"/>
<polygon points="508.4,569.7 507.5,569.6 619.5,472.6 620.4,472.7" fill="#7F9FCC" stroke="#7F9FCC" stroke-width=".5"/>
<polygon points="517.2,572.1 517.2,570.4 629.3,473.4 629.3,475.1" fill="#86A7D6" stroke="#86A7D6" stroke-width=".5"/>
<polygon points="517.2,570.4 516.4,570.4 628.4,473.4 629.3,473.4" fill="#7F9FCC" stroke="#7F9FCC" stroke-width=".5"/>
<polygon points="516.4,570.4 516.4,539.0 628.4,442.0 628.4,473.4" fill="#35435A" stroke="#35435A" stroke-width=".5"/>
<polygon points="517.2,537.4 507.5,536.6 619.5,439.6 629.3,440.4" fill="#7F9FCC" stroke="#7F9FCC" stroke-width=".5"/>
<polygon points="517.2,539.1 517.2,537.4 629.3,440.4 629.3,442.0" fill="#86A7D6" stroke="#86A7D6" stroke-width=".5"/>
<polygon points="507.5,571.2 517.2,572.1 517.2,570.4 516.4,570.4 516.4,539.0 517.2,539.1 517.2,537.4 507.5,536.6 507.5,538.2 508.4,538.3 508.4,569.7 507.5,569.6" fill="#6B8AB5" stroke="#6B8AB5" stroke-width=".5"/>
<polygon points="881.1,601.5 880.3,601.4 992.3,504.4 993.2,504.5" fill="#7F9FCC" stroke="#7F9FCC" stroke-width=".5"/>
<polygon points="890.0,603.9 890.0,602.2 1002.0,505.2 1002.0,506.8" fill="#86A7D6" stroke="#86A7D6" stroke-width=".5"/>
<polygon points="890.0,602.2 889.1,602.1 1001.2,505.1 1002.0,505.2" fill="#7F9FCC" stroke="#7F9FCC" stroke-width=".5"/>
<polygon points="889.1,602.1 889.1,570.8 1001.2,473.8 1001.2,505.1" fill="#35435A" stroke="#35435A" stroke-width=".5"/>
<polygon points="890.0,569.2 880.3,568.4 992.3,471.4 1002.0,472.2" fill="#7F9FCC" stroke="#7F9FCC" stroke-width=".5"/>
<polygon points="890.0,570.8 890.0,569.2 1002.0,472.2 1002.0,473.8" fill="#86A7D6" stroke="#86A7D6" stroke-width=".5"/>
<polygon points="880.3,603.0 890.0,603.9 890.0,602.2 889.1,602.1 889.1,570.8 890.0,570.8 890.0,569.2 880.3,568.4 880.3,570.0 881.1,570.1 881.1,601.5 880.3,601.4" fill="#6B8AB5" stroke="#6B8AB5" stroke-width=".5"/>
<polygon points="711.3,442.9 581.6,887.7 589.7,890.0 719.4,445.3" fill="url(#tg6)"/>
<polygon points="589.2,577.1 718.9,769.3 711.8,774.1 582.1,582.0" fill="url(#tg7)"/>
<polygon points="718.1,439.0 880.0,576.2 874.6,582.6 712.6,445.4" fill="url(#tg8)"/>
<polygon points="584.8,550.4 1006.2,462.9 1007.9,471.2 586.5,558.6" fill="url(#tg9)"/>
<polygon points="586.5,543.9 708.8,438.1 717.1,447.8 594.9,553.6" fill="url(#tg10)"/>
<ellipse cx="590.7" cy="548.8" rx="3.6" ry="5.6" transform="rotate(28 590.7 548.8)" fill="#50658A" stroke="#8FB0DE" stroke-width="1.2"/>
<path d="M496.6 509.4L474.6 528.7M496.6 509.4L536.6 520.4M496.6 509.4L496.6 548.4M496.6 548.4L474.6 567.7M496.6 548.4L536.6 559.4M536.6 520.4L536.6 559.4" stroke="#FF6A10" stroke-width=".9" fill="none"/>
<path d="M496.6 509.4L536.6 520.4M496.6 509.4L496.6 548.4M496.6 548.4L536.6 559.4M536.6 520.4L536.6 559.4" stroke="#FF2A00" stroke-width="2.1" stroke-dasharray="3.6 2.6" fill="none"/>
<path d="M577.6 516.3L555.6 535.6M577.6 516.3L617.6 527.3M577.6 516.3L577.6 555.3M577.6 555.3L555.6 574.6M577.6 555.3L617.6 566.3M617.6 527.3L617.6 566.3" stroke="#FF6A10" stroke-width=".9" fill="none"/>
<path d="M577.6 516.3L617.6 527.3M577.6 516.3L577.6 555.3M577.6 555.3L617.6 566.3M617.6 527.3L617.6 566.3" stroke="#FF2A00" stroke-width="2.1" stroke-dasharray="3.6 2.6" fill="none"/>
<path d="M869.3 541.1L847.3 560.4M869.3 541.1L909.3 552.1M869.3 541.1L869.3 580.1M869.3 580.1L847.3 599.4M869.3 580.1L909.3 591.1" stroke="#FF6A10" stroke-width=".9" fill="none"/>
<path d="M869.3 541.1L909.3 552.1M869.3 541.1L869.3 580.1M869.3 580.1L909.3 591.1" stroke="#FF2A00" stroke-width="2.1" stroke-dasharray="3.6 2.6" fill="none"/>
<path d="M579.1 864.5L561.0 880.3M579.1 864.5L611.9 873.5M579.1 864.5L579.1 896.5M579.1 896.5L561.0 912.3M579.1 896.5L611.9 905.5" stroke="#FF6A10" stroke-width=".9" fill="none"/>
<path d="M579.1 864.5L611.9 873.5M579.1 864.5L579.1 896.5M579.1 896.5L611.9 905.5" stroke="#FF2A00" stroke-width="2.1" stroke-dasharray="3.6 2.6" fill="none"/>
<polygon points="505.8,578.5 510.2,574.8 574.5,580.2 570.2,584.0" fill="#7F9FCC" stroke="#7F9FCC" stroke-width=".5"/>
<polygon points="505.2,579.0 505.2,547.2 569.6,552.7 569.6,584.5" fill="url(#fg11)"/>
<polygon points="500.9,582.8 505.2,579.0 569.6,584.5 565.2,588.3" fill="#7F9FCC" stroke="#7F9FCC" stroke-width=".5"/>
<polygon points="500.9,547.9 510.2,539.8 574.5,545.3 565.2,553.4" fill="#7F9FCC" stroke="#7F9FCC" stroke-width=".5"/>
<polygon points="500.9,585.9 500.9,582.8 565.2,588.3 565.2,591.4" fill="#7F9FCC" stroke="#7F9FCC" stroke-width=".5"/>
<polygon points="574.5,583.3 565.2,591.4 565.2,588.3 569.6,584.5 569.6,552.7 565.2,556.4 565.2,553.4 574.5,545.3 574.5,548.4 570.2,552.2 570.2,584.0 574.5,580.2" fill="#9BBAE4" stroke="#9BBAE4" stroke-width=".5"/>
<polygon points="500.9,550.9 500.9,547.9 565.2,553.4 565.2,556.4" fill="#7F9FCC" stroke="#7F9FCC" stroke-width=".5"/>
<line x1="509.3" y1="544.2" x2="566.1" y2="549.0" stroke="#A9C6EC" stroke-width="1.1" stroke-dasharray="7 4"/>
<polygon points="575.9,887.9 572.1,891.2 572.1,549.2 575.9,545.9" fill="#35435A" stroke="#35435A" stroke-width=".5"/>
<polygon points="599.2,894.1 571.5,891.8 571.5,549.8 599.2,552.1" fill="#6B8AB5" stroke="#6B8AB5" stroke-width=".5"/>
<polygon points="571.5,891.8 567.6,895.1 567.6,553.1 571.5,549.8" fill="#35435A" stroke="#35435A" stroke-width=".5"/>
<polygon points="605.5,890.4 597.2,897.6 597.2,555.6 605.5,548.4" fill="#35435A" stroke="#35435A" stroke-width=".5"/>
<polygon points="567.6,895.1 565.7,894.9 565.7,552.9 567.6,553.1" fill="#6B8AB5" stroke="#6B8AB5" stroke-width=".5"/>
<polygon points="597.2,897.6 595.3,897.5 595.3,555.4 597.2,555.6" fill="#6B8AB5" stroke="#6B8AB5" stroke-width=".5"/>
<polygon points="565.7,552.9 574.0,545.7 575.9,545.9 572.1,549.2 599.8,551.6 603.6,548.3 605.5,548.4 597.2,555.6 595.3,555.4 599.2,552.1 571.5,549.8 567.6,553.1" fill="#7F9FCC" stroke="#7F9FCC" stroke-width=".5"/>
<polygon points="603.1,586.8 607.4,583.1 880.1,606.3 875.7,610.1" fill="#7F9FCC" stroke="#7F9FCC" stroke-width=".5"/>
<polygon points="602.5,587.3 602.5,555.5 875.1,578.7 875.1,610.6" fill="url(#fg12)"/>
<polygon points="598.1,591.1 602.5,587.3 875.1,610.6 870.8,614.3" fill="#7F9FCC" stroke="#7F9FCC" stroke-width=".5"/>
<polygon points="598.1,556.2 607.4,548.1 880.1,571.4 870.8,579.4" fill="#7F9FCC" stroke="#7F9FCC" stroke-width=".5"/>
<polygon points="598.1,594.2 598.1,591.1 870.8,614.3 870.8,617.4" fill="#7F9FCC" stroke="#7F9FCC" stroke-width=".5"/>
<polygon points="598.1,559.2 598.1,556.2 870.8,579.4 870.8,582.5" fill="#7F9FCC" stroke="#7F9FCC" stroke-width=".5"/>
<polygon points="880.1,609.4 870.8,617.4 870.8,614.3 875.1,610.6 875.1,578.7 870.8,582.5 870.8,579.4 880.1,571.4 880.1,574.4 875.7,578.2 875.7,610.1 880.1,606.3" fill="#9BBAE4" stroke="#9BBAE4" stroke-width=".5"/>
<line x1="606.6" y1="552.5" x2="871.6" y2="575.1" stroke="#A9C6EC" stroke-width="1.1" stroke-dasharray="7 4"/>
<path d="M474.6 528.7L513.5 539.8M513.5 539.8L536.6 520.4M474.6 528.7L474.6 567.7M513.5 539.8L513.5 578.8M474.6 567.7L513.5 578.8M513.5 578.8L525.0 569.1" stroke="#FF6A10" stroke-width=".9" fill="none"/>
<path d="M474.6 528.7L513.5 539.8M474.6 528.7L474.6 567.7M513.5 539.8L513.5 578.8M474.6 567.7L513.5 578.8M527.3 528.1L536.6 520.4" stroke="#FF2A00" stroke-width="2.1" stroke-dasharray="3.6 2.6" fill="none"/>
<path d="M555.6 535.6L594.5 546.7M594.5 546.7L617.6 527.3M555.6 535.6L555.6 574.6M594.5 546.7L594.5 585.7M555.6 574.6L594.5 585.7M594.5 585.7L606.1 576.0" stroke="#FF6A10" stroke-width=".9" fill="none"/>
<path d="M555.6 535.6L594.5 546.7M555.6 535.6L555.6 574.6M594.5 546.7L594.5 585.7M555.6 574.6L594.5 585.7M608.4 535.0L617.6 527.3" stroke="#FF2A00" stroke-width="2.1" stroke-dasharray="3.6 2.6" fill="none"/>
<path d="M847.3 560.4L886.2 571.5M886.2 571.5L909.3 552.1M847.3 560.4L847.3 599.4M886.2 571.5L886.2 610.5M847.3 599.4L886.2 610.5M886.2 610.5L909.3 591.1M909.3 552.1L909.3 591.1" stroke="#FF6A10" stroke-width=".9" fill="none"/>
<path d="M847.3 560.4L886.2 571.5M847.3 560.4L847.3 599.4M886.2 571.5L886.2 610.5M847.3 599.4L886.2 610.5M909.3 552.1L909.3 591.1M900.1 559.9L909.3 552.1M886.2 610.5L896.6 601.8" stroke="#FF2A00" stroke-width="2.1" stroke-dasharray="3.6 2.6" fill="none"/>
<path d="M561.0 880.3L592.9 889.4M592.9 889.4L611.9 873.5M561.0 880.3L561.0 912.3M592.9 889.4L592.9 921.4M561.0 912.3L592.9 921.4M592.9 921.4L611.9 905.5M611.9 873.5L611.9 905.5" stroke="#FF6A10" stroke-width=".9" fill="none"/>
<path d="M561.0 880.3L592.9 889.4M561.0 880.3L561.0 912.3M592.9 889.4L592.9 921.4M561.0 912.3L592.9 921.4M611.9 873.5L611.9 905.5M604.3 879.9L611.9 873.5M592.9 921.4L601.4 914.2" stroke="#FF2A00" stroke-width="2.1" stroke-dasharray="3.6 2.6" fill="none"/>
<path d="M586.4 880.2V904.2M573.6 889.7L596.6 895.3M579.1 898.7L590.6 888.2" stroke="#000" stroke-width="1.5" fill="none"/>
<ellipse cx="585.6" cy="892.7" rx="7.7" ry="6.6" fill="url(#sph)"/>
<polygon points="371.1,688.5 370.3,688.4 489.8,584.9 490.7,585.0" fill="#7F9FCC" stroke="#7F9FCC" stroke-width=".5"/>
<polygon points="380.0,690.9 380.0,689.3 499.5,585.8 499.5,587.4" fill="#86A7D6" stroke="#86A7D6" stroke-width=".5"/>
<polygon points="380.0,689.3 379.1,689.2 498.7,585.7 499.5,585.8" fill="#7F9FCC" stroke="#7F9FCC" stroke-width=".5"/>
<polygon points="379.1,689.2 379.1,657.8 498.7,554.3 498.7,585.7" fill="#35435A" stroke="#35435A" stroke-width=".5"/>
<polygon points="380.0,656.2 370.3,655.4 489.8,551.9 499.5,552.7" fill="#7F9FCC" stroke="#7F9FCC" stroke-width=".5"/>
<polygon points="380.0,657.9 380.0,656.2 499.5,552.7 499.5,554.4" fill="#86A7D6" stroke="#86A7D6" stroke-width=".5"/>
<polygon points="370.3,690.1 380.0,690.9 380.0,689.3 379.1,689.2 379.1,657.8 380.0,657.9 380.0,656.2 370.3,655.4 370.3,657.1 371.1,657.1 371.1,688.5 370.3,688.4" fill="#6B8AB5" stroke="#6B8AB5" stroke-width=".5"/>
<polygon points="743.9,720.3 743.0,720.2 862.6,616.7 863.4,616.8" fill="#7F9FCC" stroke="#7F9FCC" stroke-width=".5"/>
<polygon points="752.8,722.7 752.8,721.0 872.3,617.5 872.3,619.2" fill="#86A7D6" stroke="#86A7D6" stroke-width=".5"/>
<polygon points="752.8,721.0 751.9,721.0 871.4,617.5 872.3,617.5" fill="#7F9FCC" stroke="#7F9FCC" stroke-width=".5"/>
<polygon points="751.9,721.0 751.9,689.6 871.4,586.1 871.4,617.5" fill="#35435A" stroke="#35435A" stroke-width=".5"/>
<polygon points="752.8,688.0 743.0,687.2 862.6,583.7 872.3,584.5" fill="#7F9FCC" stroke="#7F9FCC" stroke-width=".5"/>
<polygon points="752.8,689.7 752.8,688.0 872.3,584.5 872.3,586.2" fill="#86A7D6" stroke="#86A7D6" stroke-width=".5"/>
<polygon points="743.0,721.8 752.8,722.7 752.8,721.0 751.9,721.0 751.9,689.6 752.8,689.7 752.8,688.0 743.0,687.2 743.0,688.8 743.9,688.9 743.9,720.3 743.0,720.2" fill="#6B8AB5" stroke="#6B8AB5" stroke-width=".5"/>
<polygon points="456.8,656.3 579.0,550.4 587.4,560.1 465.2,665.9" fill="url(#tg13)"/>
<ellipse cx="461.0" cy="661.1" rx="3.6" ry="5.6" transform="rotate(28 461.0 661.1)" fill="#50658A" stroke="#8FB0DE" stroke-width="1.2"/>
<path d="M366.8 621.7L344.8 641.0M366.8 621.7L406.8 632.7M366.8 621.7L366.8 660.7M366.8 660.7L344.8 680.0M366.8 660.7L406.8 671.7M406.8 632.7L406.8 671.7" stroke="#FF6A10" stroke-width=".9" fill="none"/>
<path d="M366.8 621.7L406.8 632.7M366.8 621.7L366.8 660.7M366.8 660.7L406.8 671.7M406.8 632.7L406.8 671.7" stroke="#FF2A00" stroke-width="2.1" stroke-dasharray="3.6 2.6" fill="none"/>
<path d="M447.9 628.6L425.9 647.9M447.9 628.6L487.9 639.6M447.9 628.6L447.9 667.6M447.9 667.6L425.9 686.9M447.9 667.6L487.9 678.6M487.9 639.6L487.9 678.6" stroke="#FF6A10" stroke-width=".9" fill="none"/>
<path d="M447.9 628.6L487.9 639.6M447.9 628.6L447.9 667.6M447.9 667.6L487.9 678.6M487.9 639.6L487.9 678.6" stroke="#FF2A00" stroke-width="2.1" stroke-dasharray="3.6 2.6" fill="none"/>
<path d="M739.6 653.5L717.6 672.8M739.6 653.5L779.6 664.5M739.6 653.5L739.6 692.5M739.6 692.5L717.6 711.8M739.6 692.5L779.6 703.5" stroke="#FF6A10" stroke-width=".9" fill="none"/>
<path d="M739.6 653.5L779.6 664.5M739.6 653.5L739.6 692.5M739.6 692.5L779.6 703.5" stroke="#FF2A00" stroke-width="2.1" stroke-dasharray="3.6 2.6" fill="none"/>
<polygon points="376.1,690.9 380.4,687.1 444.8,692.6 440.5,696.3" fill="#7F9FCC" stroke="#7F9FCC" stroke-width=".5"/>
<polygon points="375.5,691.4 375.5,659.5 439.9,665.0 439.9,696.9" fill="url(#fg14)"/>
<polygon points="371.2,695.1 375.5,691.4 439.9,696.9 435.5,700.6" fill="#7F9FCC" stroke="#7F9FCC" stroke-width=".5"/>
<polygon points="371.2,660.2 380.4,652.1 444.8,657.6 435.5,665.7" fill="#7F9FCC" stroke="#7F9FCC" stroke-width=".5"/>
<polygon points="371.2,698.2 371.2,695.1 435.5,700.6 435.5,703.7" fill="#7F9FCC" stroke="#7F9FCC" stroke-width=".5"/>
<polygon points="444.8,695.7 435.5,703.7 435.5,700.6 439.9,696.9 439.9,665.0 435.5,668.8 435.5,665.7 444.8,657.6 444.8,660.7 440.5,664.5 440.5,696.3 444.8,692.6" fill="#9BBAE4" stroke="#9BBAE4" stroke-width=".5"/>
<polygon points="371.2,663.3 371.2,660.2 435.5,665.7 435.5,668.8" fill="#7F9FCC" stroke="#7F9FCC" stroke-width=".5"/>
<line x1="379.6" y1="656.5" x2="436.4" y2="661.3" stroke="#A9C6EC" stroke-width="1.1" stroke-dasharray="7 4"/>
<polygon points="446.2,1000.2 442.4,1003.6 442.4,661.6 446.2,658.2" fill="#35435A" stroke="#35435A" stroke-width=".5"/>
<polygon points="469.4,1006.5 441.8,1004.1 441.8,662.1 469.4,664.4" fill="#6B8AB5" stroke="#6B8AB5" stroke-width=".5"/>
<polygon points="441.8,1004.1 437.9,1007.4 437.9,665.4 441.8,662.1" fill="#35435A" stroke="#35435A" stroke-width=".5"/>
<polygon points="475.8,1002.8 467.5,1009.9 467.5,667.9 475.8,660.7" fill="#35435A" stroke="#35435A" stroke-width=".5"/>
<polygon points="437.9,1007.4 436.0,1007.3 436.0,665.3 437.9,665.4" fill="#6B8AB5" stroke="#6B8AB5" stroke-width=".5"/>
<polygon points="467.5,1009.9 465.6,1009.8 465.6,667.8 467.5,667.9" fill="#6B8AB5" stroke="#6B8AB5" stroke-width=".5"/>
<polygon points="436.0,665.3 444.3,658.1 446.2,658.2 442.4,661.6 470.0,663.9 473.9,660.6 475.8,660.7 467.5,667.9 465.6,667.8 469.4,664.4 441.8,662.1 437.9,665.4" fill="#7F9FCC" stroke="#7F9FCC" stroke-width=".5"/>
<line x1="455.9" y1="670.7" x2="455.9" y2="1001.2" stroke="#A9C6EC" stroke-width="1.0" stroke-dasharray="8 5"/>
<polygon points="473.4,699.1 477.7,695.4 750.3,718.6 746.0,722.4" fill="#7F9FCC" stroke="#7F9FCC" stroke-width=".5"/>
<polygon points="472.8,699.7 472.8,667.8 745.4,691.0 745.4,722.9" fill="url(#fg15)"/>
<polygon points="468.4,703.4 472.8,699.7 745.4,722.9 741.1,726.7" fill="#7F9FCC" stroke="#7F9FCC" stroke-width=".5"/>
<polygon points="468.4,668.5 477.7,660.4 750.3,683.7 741.1,691.7" fill="#7F9FCC" stroke="#7F9FCC" stroke-width=".5"/>
<polygon points="468.4,706.5 468.4,703.4 741.1,726.7 741.1,729.8" fill="#7F9FCC" stroke="#7F9FCC" stroke-width=".5"/>
<polygon points="468.4,671.6 468.4,668.5 741.1,691.7 741.1,694.8" fill="#7F9FCC" stroke="#7F9FCC" stroke-width=".5"/>
<polygon points="750.3,721.7 741.1,729.8 741.1,726.7 745.4,722.9 745.4,691.0 741.1,694.8 741.1,691.7 750.3,683.7 750.3,686.8 746.0,690.5 746.0,722.4 750.3,718.6" fill="#9BBAE4" stroke="#9BBAE4" stroke-width=".5"/>
<line x1="476.9" y1="664.8" x2="741.9" y2="687.4" stroke="#A9C6EC" stroke-width="1.1" stroke-dasharray="7 4"/>
<path d="M344.8 641.0L383.7 652.1M383.7 652.1L406.8 632.7M344.8 641.0L344.8 680.0M383.7 652.1L383.7 691.1M344.8 680.0L383.7 691.1M383.7 691.1L395.3 681.4" stroke="#FF6A10" stroke-width=".9" fill="none"/>
<path d="M344.8 641.0L383.7 652.1M344.8 641.0L344.8 680.0M383.7 652.1L383.7 691.1M344.8 680.0L383.7 691.1M397.6 640.4L406.8 632.7" stroke="#FF2A00" stroke-width="2.1" stroke-dasharray="3.6 2.6" fill="none"/>
<path d="M425.9 647.9L464.8 659.0M464.8 659.0L487.9 639.6M425.9 647.9L425.9 686.9M464.8 659.0L464.8 698.0M425.9 686.9L464.8 698.0M464.8 698.0L476.3 688.3" stroke="#FF6A10" stroke-width=".9" fill="none"/>
<path d="M425.9 647.9L464.8 659.0M425.9 647.9L425.9 686.9M464.8 659.0L464.8 698.0M425.9 686.9L464.8 698.0M478.7 647.4L487.9 639.6" stroke="#FF2A00" stroke-width="2.1" stroke-dasharray="3.6 2.6" fill="none"/>
<path d="M717.6 672.8L756.5 683.9M756.5 683.9L779.6 664.5M717.6 672.8L717.6 711.8M756.5 683.9L756.5 722.9M717.6 711.8L756.5 722.9M756.5 722.9L779.6 703.5M779.6 664.5L779.6 703.5" stroke="#FF6A10" stroke-width=".9" fill="none"/>
<path d="M717.6 672.8L756.5 683.9M717.6 672.8L717.6 711.8M756.5 683.9L756.5 722.9M717.6 711.8L756.5 722.9M779.6 664.5L779.6 703.5M770.4 672.2L779.6 664.5M756.5 722.9L766.9 714.1" stroke="#FF2A00" stroke-width="2.1" stroke-dasharray="3.6 2.6" fill="none"/>
<path d="M375.6 643.6V667.6M362.8 653.1L385.8 658.7M368.3 662.1L379.8 651.6" stroke="#000" stroke-width="1.5" fill="none"/>
<ellipse cx="374.8" cy="656.1" rx="7.7" ry="6.6" fill="url(#sph)"/>
<path d="M456.7 650.5V674.5M443.9 660.0L466.9 665.6M449.4 669.0L460.9 658.5" stroke="#000" stroke-width="1.5" fill="none"/>
<ellipse cx="455.9" cy="663.0" rx="7.7" ry="6.6" fill="url(#sph)"/>
<path d="M748.4 675.4V699.4M735.6 684.9L758.6 690.5M741.1 693.9L752.6 683.4" stroke="#000" stroke-width="1.5" fill="none"/>
<ellipse cx="747.6" cy="687.9" rx="7.7" ry="6.6" fill="url(#sph)"/>
<path d="M505.4 531.3V555.3M492.6 540.8L515.6 546.4M498.1 549.8L509.6 539.3" stroke="#000" stroke-width="1.5" fill="none"/>
<ellipse cx="504.6" cy="543.8" rx="7.7" ry="6.6" fill="url(#sph)"/>
<path d="M586.4 538.2V562.2M573.6 547.7L596.6 553.3M579.1 556.7L590.6 546.2" stroke="#000" stroke-width="1.5" fill="none"/>
<ellipse cx="585.6" cy="550.7" rx="7.7" ry="6.6" fill="url(#sph)"/>
<path d="M878.1 563.0V587.0M865.3 572.5L888.3 578.1M870.8 581.5L882.3 571.0" stroke="#000" stroke-width="1.5" fill="none"/>
<ellipse cx="877.3" cy="575.5" rx="7.7" ry="6.6" fill="url(#sph)"/>
<path d="M635.1 418.9V442.9M622.3 428.4L645.3 434.0M627.8 437.4L639.3 426.9" stroke="#000" stroke-width="1.5" fill="none"/>
<ellipse cx="634.3" cy="431.4" rx="7.7" ry="6.6" fill="url(#sph)"/>
<path d="M716.1 425.8V449.8M703.3 435.3L726.3 440.9M708.8 444.3L720.3 433.8" stroke="#000" stroke-width="1.5" fill="none"/>
<ellipse cx="715.3" cy="438.3" rx="7.7" ry="6.6" fill="url(#sph)"/>
<path d="M1007.9 450.7V474.7M995.1 460.2L1018.1 465.8M1000.6 469.2L1012.1 458.7" stroke="#000" stroke-width="1.5" fill="none"/>
<ellipse cx="1007.1" cy="463.2" rx="7.7" ry="6.6" fill="url(#sph)"/>
<path d="M764.8 306.6V330.6M752.0 316.1L775.0 321.7M757.5 325.1L769.0 314.6" stroke="#000" stroke-width="1.5" fill="none"/>
<ellipse cx="764.0" cy="319.1" rx="7.7" ry="6.6" fill="url(#sph)"/>
<path d="M845.9 313.5V337.5M833.1 323.0L856.1 328.6M838.6 332.0L850.1 321.5" stroke="#000" stroke-width="1.5" fill="none"/>
<ellipse cx="845.1" cy="326.0" rx="7.7" ry="6.6" fill="url(#sph)"/>
<path d="M1137.6 338.4V362.4M1124.8 347.9L1147.8 353.5M1130.3 356.9L1141.8 346.4" stroke="#000" stroke-width="1.5" fill="none"/>
<ellipse cx="1136.8" cy="350.9" rx="7.7" ry="6.6" fill="url(#sph)"/>
<path fill-rule="evenodd" fill="#BDBDBD" fill-opacity=".8" d="M1108.2 330.3a51.5 28.8 0 1 0 103 0a51.5 28.8 0 1 0 -103 0Z M1120.4 327.5a39.5 20.5 0 1 0 79 0a39.5 20.5 0 1 0 -79 0Z"/>
<path d="M1106.8 359.8L1106.8 335.8L1145.7 346.9" stroke="#FF6A10" stroke-width=".9" fill="none"/><path d="M1106.8 359.8L1106.8 335.8L1145.7 346.9" stroke="#FF2A00" stroke-width="2.1" stroke-dasharray="3.6 2.6" fill="none"/>
<g opacity=".75"><path d="M1137.6 338.4V362.4M1124.8 347.9L1147.8 353.5M1130.3 356.9L1141.8 346.4" stroke="#000" stroke-width="1.5" fill="none"/><ellipse cx="1136.8" cy="350.9" rx="7.7" ry="6.6" fill="url(#sph)"/></g>
<path d="M1124.8 356.9L1135.8 348.9M1127.8 344.9L1131.8 351.9" stroke="#222" stroke-width="2.6" stroke-opacity=".85" fill="none"/>
<path d="M1198.8 337.2L1213 341.4" stroke="#444" stroke-width="1"/><path d="M1215 342L1209.6 342.6L1210.6 338.8Z" fill="#444"/>
<path d="M1112 311.6L1126 309.2" stroke="#444" stroke-width="1.2"/><path d="M1119.5 306.5L1122 314.5" stroke="#333" stroke-width="2.2"/>
<polygon points="1123.8,288.4 1171.0,299.1 1168.9,345.3 1127.2,329.6" fill="#3F3F3F" fill-opacity=".93"/>
<polygon points="1171.0,299.1 1192.6,280.6 1190.2,318.3 1168.9,345.3" fill="#4A4A4A" fill-opacity=".93"/>
<polygon points="1152.6,272.1 1192.6,280.6 1171.0,299.1 1123.8,288.4" fill="#595959" fill-opacity=".95"/>
<path d="M1152.6 272.1L1152.0 313.5L1127.2 329.6M1152.0 313.5L1190.2 318.3" stroke="#666" stroke-width=".8" fill="none"/>
<path d="M1123.8 288.4L1171 299.1L1192.6 280.6M1171 299.1L1168.9 345.3" stroke="#2a2a2a" stroke-width="1" fill="none"/>
<polygon points="1152.6,272.1 1192.6,280.6 1190.2,318.3 1168.9,345.3 1127.2,329.6 1123.8,288.4" fill="none" stroke="#1e1e1e" stroke-width="1.3"/>
<text x="0" y="0" text-anchor="middle" font-size="9" font-weight="700" fill="#fff" transform="translate(1147 321.5) skewY(18)">+Y</text>
<path d="M1158 284.5L1164 286.2M1161.5 283L1163 287.5" stroke="#fff" stroke-width="1.3"/>
<path d="M1182.5 307Q1180.5 311 1182 314.5" stroke="#fff" stroke-width="1.3" fill="none"/><rect x="796.2" y="304.1" width="33" height="18.6" fill="#E1E1E1"/><text x="812.7" y="318.3" text-anchor="middle" font-size="13.4" fill="#000" textLength="26.5" lengthAdjust="spacingAndGlyphs">1-32</text><rect x="667.0" y="416.5" width="33" height="18.6" fill="#E1E1E1"/><text x="683.5" y="430.7" text-anchor="middle" font-size="13.4" fill="#000" textLength="26.5" lengthAdjust="spacingAndGlyphs">1-28</text><rect x="686.2" y="369.0" width="33" height="18.6" fill="#E1E1E1"/><text x="702.7" y="383.2" text-anchor="middle" font-size="13.4" fill="#000" textLength="26.5" lengthAdjust="spacingAndGlyphs">1-18</text><rect x="537.0" y="528.2" width="33" height="18.6" fill="#E1E1E1"/><text x="553.5" y="542.4" text-anchor="middle" font-size="13.4" fill="#000" textLength="26.5" lengthAdjust="spacingAndGlyphs">1-30</text><rect x="557.0" y="481.0" width="33" height="18.6" fill="#E1E1E1"/><text x="573.5" y="495.2" text-anchor="middle" font-size="13.4" fill="#000" textLength="26.5" lengthAdjust="spacingAndGlyphs">1-17</text><rect x="408.3" y="640.9" width="33" height="18.6" fill="#E1E1E1"/><text x="424.8" y="655.1" text-anchor="middle" font-size="13.4" fill="#000" textLength="26.5" lengthAdjust="spacingAndGlyphs">1-31</text><rect x="427.0" y="593.0" width="33" height="18.6" fill="#E1E1E1"/><text x="443.5" y="607.2" text-anchor="middle" font-size="13.4" fill="#000" textLength="26.5" lengthAdjust="spacingAndGlyphs">1-16</text><rect x="800.0" y="625.3" width="26.5" height="18.6" fill="#E1E1E1"/><text x="813.2" y="639.5" text-anchor="middle" font-size="13.4" fill="#000" textLength="20.0" lengthAdjust="spacingAndGlyphs">1-7</text><rect x="573.0" y="655.0" width="33" height="18.6" fill="#E1E1E1"/><text x="589.5" y="669.2" text-anchor="middle" font-size="13.4" fill="#000" textLength="26.5" lengthAdjust="spacingAndGlyphs">1-27</text><rect x="961.5" y="317.7" width="33" height="18.6" fill="#E1E1E1"/><text x="978.0" y="331.9" text-anchor="middle" font-size="13.4" fill="#000" textLength="26.5" lengthAdjust="spacingAndGlyphs">1-24</text><rect x="1059.2" y="400.1" width="26.5" height="18.6" fill="#E1E1E1"/><text x="1072.5" y="414.3" text-anchor="middle" font-size="13.4" fill="#000" textLength="20.0" lengthAdjust="spacingAndGlyphs">1-5</text><rect x="832.2" y="430.2" width="33" height="18.6" fill="#E1E1E1"/><text x="848.7" y="444.4" text-anchor="middle" font-size="13.4" fill="#000" textLength="26.5" lengthAdjust="spacingAndGlyphs">1-25</text><rect x="929.2" y="511.5" width="26.5" height="18.6" fill="#E1E1E1"/><text x="942.5" y="525.7" text-anchor="middle" font-size="13.4" fill="#000" textLength="20.0" lengthAdjust="spacingAndGlyphs">1-6</text><rect x="702.0" y="542.0" width="33" height="18.6" fill="#E1E1E1"/><text x="718.5" y="556.2" text-anchor="middle" font-size="13.4" fill="#000" textLength="26.5" lengthAdjust="spacingAndGlyphs">1-26</text><rect x="455.0" y="780.7" width="26.5" height="18.6" fill="#E1E1E1"/><text x="468.2" y="794.9" text-anchor="middle" font-size="13.4" fill="#000" textLength="20.0" lengthAdjust="spacingAndGlyphs">1-4</text></g></svg>
<svg class="a" style="left:0;top:0;pointer-events:none" width="1920" height="1020" viewBox="0 0 1920 1020">
<g fill="none" stroke="#6b6b6b" stroke-width="1.7" stroke-linejoin="miter"><path d="M322.5 59.5 L332 50.5 L341.5 59.5"/><path d="M325.3 58.5 V66 H338.7 V58.5"/></g>
<rect x="1827" y="26.5" width="11" height="2.6" fill="#111"/>
<rect x="1860.3" y="17.3" width="10.4" height="10.4" fill="none" stroke="#111" stroke-width="1.6"/><rect x="1859.5" y="16.5" width="12" height="3" fill="#111"/>
<path d="M1893.5 17.5 L1903.5 27.5 M1903.5 17.5 L1893.5 27.5" stroke="#111" stroke-width="2.4" fill="none"/>
<rect x="1896.3" y="52.2" width="2.6" height="7" fill="#111"/><rect x="1896.3" y="48" width="2.6" height="2.6" fill="#111"/>
<g fill="none" stroke="#b4b4b4"><circle cx="1791" cy="51.5" r="4.6" stroke-width="2"/><path d="M1794.5 55.5 L1803 63.5" stroke-width="2.6"/></g>
<g fill="none" stroke="#a9a9a9" stroke-width="2.1"><path d="M25.5 104.3 H14.5 V126.2 H49.5 V104.3 H38.5"/><path d="M32 92.5 V115.5"/><path d="M27 110.8 L32 116 L37 110.8"/></g>
<g fill="none" stroke="#a9a9a9" stroke-width="2.1"><path d="M73.5 104.3 H62.5 V126.2 H97.5 V104.3 H86.5"/><path d="M80 92.5 V115.5"/><path d="M75 110.8 L80 116 L85 110.8"/></g>
<g fill="none" stroke="#a9a9a9" stroke-width="2.1"><path d="M121.5 104.3 H110.5 V126.2 H145.5 V104.3 H134.5"/><path d="M128 92.5 V115.5"/><path d="M123 110.8 L128 116 L133 110.8"/></g>
<g fill="#6a6a6a"><rect x="173.8" y="106.3" width="34.8" height="7.2"/><rect x="189.6" y="91.3" width="3.6" height="10.8"/><rect x="189.6" y="117.6" width="3.6" height="10.8"/></g>
<g fill="#474747"><rect x="237.6" y="98" width="28.8" height="5.5"/><rect x="237.6" y="116.3" width="28.8" height="5.5"/></g><g fill="none" stroke="#7a7a7a" stroke-width=".7"><path d="M239.5 99.9 H264.5 M239.5 101.7 H264.5 M239.5 118.2 H264.5 M239.5 120 H264.5"/></g><g fill="none" stroke="#474747"><path d="M238.6 97.3 V104.3 M265.4 97.3 V104.3 M238.6 115.5 V122.5 M265.4 115.5 V122.5" stroke-width="2"/><path d="M240 103.5 V107.3 L233 109.2 L242 110.4 L240 112.6 V116.5" stroke-width="1.2"/><path d="M264 103.5 V107.3 L271 109.2 L262 110.4 L264 112.6 V116.5" stroke-width="1.2"/></g>
<g fill="#6a6a6a"><rect x="313.3" y="111.3" width="35.1" height="8.6"/><path d="M315.2 104.2 L319.8 100 L331 111 L342.2 100 L346.8 104.2 L334 116.5 H328Z"/></g>
<g fill="none" stroke="#757575" stroke-width="1.5"><path d="M395.4 113.3 V95 M395.4 113.3 H414 M395.4 113.3 L383 126"/></g><g fill="#757575"><path d="M395.4 90.6 L399.4 97 H391.4Z"/><path d="M419.5 113.3 L413 109.3 V117.3Z"/><path d="M380 129 L381.6 121.8 L387.2 127.4Z"/></g>
<g fill="none" stroke="#cbcbcb" stroke-width="2" stroke-linejoin="round"><path d="M443 123.5 V96.5 H454.5 L457.5 100.5 H470 V104"/><path d="M443 123.5 L449.5 104.5 H479 L472.5 123.5 Z"/></g>
<g fill="none" stroke="#5a5a5a" stroke-width="2.1"><path d="M500.7 99.5 A15.2 15.2 0 1 0 517.3 99.5"/><path d="M509 92 V110.5"/></g>
<g fill="#cdcdcd"><rect x="548.3" y="91.3" width="16.6" height="16.6"/><rect x="569" y="91.3" width="16.6" height="16.6"/><rect x="548.3" y="112" width="16.6" height="16.6"/><rect x="569" y="112" width="16.6" height="16.6"/></g><g stroke="#fff" stroke-width="1.8" fill="none"><path d="M552.6 99.6 H560.6 M556.6 95.6 V103.6"/><path d="M573.3 99.6 H581.3"/><path d="M553.6 117.3 L559.6 123.3 M559.6 117.3 L553.6 123.3"/><path d="M573.3 120.3 H581.3"/></g><g fill="#fff"><circle cx="577.3" cy="116.6" r="1.1"/><circle cx="577.3" cy="124" r="1.1"/></g>
<g fill="none" stroke="#cbcbcb" stroke-width="2"><path d="M638.5 101 A16 16 0 1 0 641.5 113"/><path d="M633 102.5 H641.6 V94"/></g>
<g fill="none" stroke="#5a5a5a" stroke-width="2.2" stroke-linejoin="round"><path d="M670.5 92.5 H687 Q689 92.5 689 94.5 V125 Q689 127 687 127 H665 Q663 127 663 125 V100 Z"/><path d="M663 100 H670.5 V92.5"/><path d="M669.5 107.5 L683 121 M683 107.5 L669.5 121"/></g>
<g fill="none" stroke="#a0a0a0" stroke-width="2.2"><path d="M721.3 99 H747.5 M752.5 99 H758.8 M721.3 110 H740.5 M745.5 110 H758.8 M721.3 120.5 H747.5 M752.5 120.5 H758.8"/><rect x="747.5" y="95.6" width="5" height="6.8" rx="1"/><rect x="740.5" y="106.6" width="5" height="6.8" rx="1"/><rect x="747.5" y="117.1" width="5" height="6.8" rx="1"/></g>
<g fill="#cdcdcd"><rect x="769" y="91" width="8.6" height="8.6"/><rect x="779.4" y="91" width="9.6" height="8.6"/><rect x="769" y="101.6" width="8.6" height="9"/><rect x="779.4" y="101.6" width="9.6" height="9"/><rect x="769" y="112.6" width="8.6" height="8.6"/><rect x="779.4" y="112.6" width="5" height="8.6"/></g><circle cx="797" cy="118" r="12.5" fill="#fff"/><g fill="none" stroke="#cdcdcd" stroke-width="1.6"><path d="M804.8 111.5 A10 10 0 1 0 807 118.5"/><path d="M800.5 112.3 H806.2 V106.6"/></g>
<g fill="none" stroke="#cbcbcb" stroke-width="2"><path d="M822.5 106.5 L835 112.5 L822.5 118.5"/><path d="M853 106.5 L840.5 112.5 L853 118.5"/></g>
<g fill="none" stroke="#cbcbcb" stroke-width="2"><path d="M885.5 105.5 L873.5 111.5 L885.5 117.5"/><path d="M890.5 105.5 L902.5 111.5 L890.5 117.5"/></g>
<path d="M954.06 98.28 L954.59 94.29 L959.41 94.29 L959.94 98.28 L962.85 99.49 L966.05 97.04 L969.46 100.45 L967.01 103.65 L968.22 106.56 L972.21 107.09 L972.21 111.91 L968.22 112.44 L967.01 115.35 L969.46 118.55 L966.05 121.96 L962.85 119.51 L959.94 120.72 L959.41 124.71 L954.59 124.71 L954.06 120.72 L951.15 119.51 L947.95 121.96 L944.54 118.55 L946.99 115.35 L945.78 112.44 L941.79 111.91 L941.79 107.09 L945.78 106.56 L946.99 103.65 L944.54 100.45 L947.95 97.04 L951.15 99.49Z" fill="none" stroke="#595959" stroke-width="2.5" stroke-linejoin="round"/><circle cx="957" cy="109.5" r="5.2" fill="none" stroke="#595959" stroke-width="2.5"/>
<g fill="#a3a3a3"><rect x="1009" y="97" width="23.5" height="7" rx="1.5"/><rect x="1009" y="106.3" width="23.5" height="7" rx="1.5"/><rect x="1009" y="115.6" width="23.5" height="7" rx="1.5"/></g><circle cx="1012.8" cy="100.5" r="1.2" fill="#fff"/><g fill="none" stroke="#a3a3a3" stroke-width="1.5"><path d="M1035.5 106 H1046.5 M1042.5 102 L1046.5 106 L1042.5 110"/><path d="M1047 114.5 H1036 M1040 110.5 L1036 114.5 L1040 118.5"/></g>
<g fill="none" stroke="#a3a3a3"><path d="M1088.5 97 H1123" stroke-width="1.6"/><path d="M1092.2 97.5 V120.5 M1095.2 97.5 V120.5 M1098.2 97.5 V120.5 M1113 97.5 V120.5 M1116 97.5 V120.5 M1119 97.5 V120.5" stroke-width="1.2"/><path d="M1087.5 124.5 H1124" stroke-width="3.4"/></g><g fill="none" stroke="#595959" stroke-width="1.4"><circle cx="1105.5" cy="109.5" r="5.6"/><path d="M1101.5 109.5 H1109.5 M1105.5 105.5 V113.5"/></g>
<g fill="#333"><path d="M1372.6 99.2 H1380 L1376.3 104.5Z"/><path d="M1564 131 H1571.4 L1567.7 136.3Z"/><path d="M1564.2 97 L1567.7 92 L1571.2 97Z"/><path d="M1564.2 107.6 H1571.2 L1567.7 112.6Z"/></g>
<g fill="none" stroke="#6a6a6a" stroke-width="1.1"><path d="M1225.5 124 L1219.5 140.5 M1225.5 124 L1229.5 133.5 M1216.5 137.5 L1233.5 132.8"/><ellipse cx="1225.5" cy="134.5" rx="6.5" ry="4.2" transform="rotate(-25 1225.5 134.5)"/><path d="M1221 139.5 L1230 129.5"/></g><g fill="#6a6a6a"><circle cx="1234" cy="132.7" r="1.4"/><circle cx="1225.5" cy="124.2" r="1.3"/><circle cx="1219.3" cy="140.6" r="1.3"/></g>
<g fill="none" stroke="#757575" stroke-width="1.2"><path d="M1315.7 133.5 V124.5 M1315.7 133.5 H1324.5 M1315.7 133.5 L1309.3 139.8"/></g><g fill="#757575"><circle cx="1315.7" cy="124.2" r="1.3"/><circle cx="1325" cy="133.5" r="1.3"/><circle cx="1309" cy="140" r="1.3"/></g>
<path d="M1619.4 90.6 h5.2 v5 h5 v5.2 h-5 v5 h-5.2 v-5 h-5 v-5.2 h5z" fill="#5EA0E8"/>
<path d="M1692.2 90.6 h5.2 v5 h5 v5.2 h-5 v5 h-5.2 v-5 h-5 v-5.2 h5z" fill="#5EA0E8"/>
<g fill="#6a6a6a"><rect x="1618.2" y="120" width="31.6" height="7.2"/><path d="M1620 113.6 L1624.2 109.8 L1634 119 L1643.8 109.8 L1648 113.6 L1636.5 124.5 H1631.5Z"/></g>
<g fill="#6a6a6a"><rect x="1691" y="111.5" width="4.8" height="15.8"/><rect x="1718" y="111.5" width="4.8" height="15.8"/><rect x="1691" y="117" width="31.8" height="5"/></g>
<g fill="none" stroke="#fff" stroke-width="2.2" stroke-linejoin="miter"><path d="M379 217.5 L390.2 206.5 L401.4 217.5"/><path d="M382.3 215.5 V226.6 H387.2 V219.3 H393.2 V226.6 H398.1 V215.5" stroke-width="2"/></g>
<g fill="none" stroke="#fff"><path d="M433 221 H424.6 V206 H441 V211" stroke-width="1.5"/><circle cx="439.3" cy="219.3" r="5.6" stroke-width="1.6"/><path d="M443.3 223.3 L448.6 228.6" stroke-width="2"/><path d="M439.3 216 V219.5 H436.3" stroke-width="1.1"/></g>
<g fill="none" stroke="#fff"><circle cx="480.3" cy="215.2" r="8.4" stroke-width="2.6"/><path d="M486.3 221.5 L493 228.6" stroke-width="3"/></g>
<g fill="none" stroke="#fff" stroke-width="2"><path d="M527 207.5 V227.5 M517 217.5 H537"/></g><g fill="#fff"><path d="M527 204.8 L531.6 210.3 H522.4Z"/><path d="M527 230.2 L531.6 224.7 H522.4Z"/><path d="M514.3 217.5 L519.8 212.9 V222.1Z"/><path d="M539.7 217.5 L534.2 212.9 V222.1Z"/></g>
<g fill="none" stroke="#fff" stroke-width="2.4"><path d="M579.5 211.5 A9.3 9.3 0 1 0 582 218.5"/></g><path d="M583 209 V217 H575Z" fill="#fff"/>
<g fill="none" stroke="#fff" stroke-width="1.6"><path d="M610.6 206.8 H605.2 V212.20000000000002"/><path d="M605.2 206.8 L611.4000000000001 213.0"/></g>
<g fill="none" stroke="#fff" stroke-width="1.6"><path d="M621.2 206.8 H626.6 V212.20000000000002"/><path d="M626.6 206.8 L620.4 213.0"/></g>
<g fill="none" stroke="#fff" stroke-width="1.6"><path d="M610.6 227.8 H605.2 V222.4"/><path d="M605.2 227.8 L611.4000000000001 221.60000000000002"/></g>
<g fill="none" stroke="#fff" stroke-width="1.6"><path d="M621.2 227.8 H626.6 V222.4"/><path d="M626.6 227.8 L620.4 221.60000000000002"/></g>
<path d="M649 217.5 L668.5 211.2 L673.6 212.4 V220 L654.5 226.8 L649 224.8Z" fill="#fff"/><path d="M649.3 217.8 L654.5 219.4 V226.5 M654.5 219.4 L673.4 212.6" stroke="#999" stroke-width="0.9" fill="none"/>
<path d="M71.78 290.01 L73.14 287.89 L76.84 290.03 L75.69 292.26 L77.47 295.35 L79.97 295.46 L79.97 299.74 L77.47 299.85 L75.69 302.94 L76.84 305.17 L73.14 307.31 L71.78 305.19 L68.22 305.19 L66.86 307.31 L63.16 305.17 L64.31 302.94 L62.53 299.85 L60.03 299.74 L60.03 295.46 L62.53 295.35 L64.31 292.26 L63.16 290.03 L66.86 287.89 L68.22 290.01Z M74.00 297.60 A4.0 4.0 0 1 0 66.00 297.60 A4.0 4.0 0 1 0 74.00 297.60Z" fill="#808080" fill-rule="evenodd"/>
<path d="M71.78 318.01 L73.14 315.89 L76.84 318.03 L75.69 320.26 L77.47 323.35 L79.97 323.46 L79.97 327.74 L77.47 327.85 L75.69 330.94 L76.84 333.17 L73.14 335.31 L71.78 333.19 L68.22 333.19 L66.86 335.31 L63.16 333.17 L64.31 330.94 L62.53 327.85 L60.03 327.74 L60.03 323.46 L62.53 323.35 L64.31 320.26 L63.16 318.03 L66.86 315.89 L68.22 318.01Z M74.00 325.60 A4.0 4.0 0 1 0 66.00 325.60 A4.0 4.0 0 1 0 74.00 325.60Z" fill="#808080" fill-rule="evenodd"/>
<path d="M71.78 346.01 L73.14 343.89 L76.84 346.03 L75.69 348.26 L77.47 351.35 L79.97 351.46 L79.97 355.74 L77.47 355.85 L75.69 358.94 L76.84 361.17 L73.14 363.31 L71.78 361.19 L68.22 361.19 L66.86 363.31 L63.16 361.17 L64.31 358.94 L62.53 355.85 L60.03 355.74 L60.03 351.46 L62.53 351.35 L64.31 348.26 L63.16 346.03 L66.86 343.89 L68.22 346.01Z M74.00 353.60 A4.0 4.0 0 1 0 66.00 353.60 A4.0 4.0 0 1 0 74.00 353.60Z" fill="#808080" fill-rule="evenodd"/>
<path d="M71.78 374.01 L73.14 371.89 L76.84 374.03 L75.69 376.26 L77.47 379.35 L79.97 379.46 L79.97 383.74 L77.47 383.85 L75.69 386.94 L76.84 389.17 L73.14 391.31 L71.78 389.19 L68.22 389.19 L66.86 391.31 L63.16 389.17 L64.31 386.94 L62.53 383.85 L60.03 383.74 L60.03 379.46 L62.53 379.35 L64.31 376.26 L63.16 374.03 L66.86 371.89 L68.22 374.01Z M74.00 381.60 A4.0 4.0 0 1 0 66.00 381.60 A4.0 4.0 0 1 0 74.00 381.60Z" fill="#808080" fill-rule="evenodd"/>
<path d="M71.78 402.01 L73.14 399.89 L76.84 402.03 L75.69 404.26 L77.47 407.35 L79.97 407.46 L79.97 411.74 L77.47 411.85 L75.69 414.94 L76.84 417.17 L73.14 419.31 L71.78 417.19 L68.22 417.19 L66.86 419.31 L63.16 417.17 L64.31 414.94 L62.53 411.85 L60.03 411.74 L60.03 407.46 L62.53 407.35 L64.31 404.26 L63.16 402.03 L66.86 399.89 L68.22 402.01Z M74.00 409.60 A4.0 4.0 0 1 0 66.00 409.60 A4.0 4.0 0 1 0 74.00 409.60Z" fill="#808080" fill-rule="evenodd"/>
<path d="M71.78 430.01 L73.14 427.89 L76.84 430.03 L75.69 432.26 L77.47 435.35 L79.97 435.46 L79.97 439.74 L77.47 439.85 L75.69 442.94 L76.84 445.17 L73.14 447.31 L71.78 445.19 L68.22 445.19 L66.86 447.31 L63.16 445.17 L64.31 442.94 L62.53 439.85 L60.03 439.74 L60.03 435.46 L62.53 435.35 L64.31 432.26 L63.16 430.03 L66.86 427.89 L68.22 430.01Z M74.00 437.60 A4.0 4.0 0 1 0 66.00 437.60 A4.0 4.0 0 1 0 74.00 437.60Z" fill="#808080" fill-rule="evenodd"/>
<path d="M71.78 458.01 L73.14 455.89 L76.84 458.03 L75.69 460.26 L77.47 463.35 L79.97 463.46 L79.97 467.74 L77.47 467.85 L75.69 470.94 L76.84 473.17 L73.14 475.31 L71.78 473.19 L68.22 473.19 L66.86 475.31 L63.16 473.17 L64.31 470.94 L62.53 467.85 L60.03 467.74 L60.03 463.46 L62.53 463.35 L64.31 460.26 L63.16 458.03 L66.86 455.89 L68.22 458.01Z M74.00 465.60 A4.0 4.0 0 1 0 66.00 465.60 A4.0 4.0 0 1 0 74.00 465.60Z" fill="#808080" fill-rule="evenodd"/>
<path d="M71.78 486.01 L73.14 483.89 L76.84 486.03 L75.69 488.26 L77.47 491.35 L79.97 491.46 L79.97 495.74 L77.47 495.85 L75.69 498.94 L76.84 501.17 L73.14 503.31 L71.78 501.19 L68.22 501.19 L66.86 503.31 L63.16 501.17 L64.31 498.94 L62.53 495.85 L60.03 495.74 L60.03 491.46 L62.53 491.35 L64.31 488.26 L63.16 486.03 L66.86 483.89 L68.22 486.01Z M74.00 493.60 A4.0 4.0 0 1 0 66.00 493.60 A4.0 4.0 0 1 0 74.00 493.60Z" fill="#808080" fill-rule="evenodd"/>
<path d="M71.78 514.01 L73.14 511.89 L76.84 514.03 L75.69 516.26 L77.47 519.35 L79.97 519.46 L79.97 523.74 L77.47 523.85 L75.69 526.94 L76.84 529.17 L73.14 531.31 L71.78 529.19 L68.22 529.19 L66.86 531.31 L63.16 529.17 L64.31 526.94 L62.53 523.85 L60.03 523.74 L60.03 519.46 L62.53 519.35 L64.31 516.26 L63.16 514.03 L66.86 511.89 L68.22 514.01Z M74.00 521.60 A4.0 4.0 0 1 0 66.00 521.60 A4.0 4.0 0 1 0 74.00 521.60Z" fill="#808080" fill-rule="evenodd"/>
<path d="M71.78 542.01 L73.14 539.89 L76.84 542.03 L75.69 544.26 L77.47 547.35 L79.97 547.46 L79.97 551.74 L77.47 551.85 L75.69 554.94 L76.84 557.17 L73.14 559.31 L71.78 557.19 L68.22 557.19 L66.86 559.31 L63.16 557.17 L64.31 554.94 L62.53 551.85 L60.03 551.74 L60.03 547.46 L62.53 547.35 L64.31 544.26 L63.16 542.03 L66.86 539.89 L68.22 542.01Z M74.00 549.60 A4.0 4.0 0 1 0 66.00 549.60 A4.0 4.0 0 1 0 74.00 549.60Z" fill="#808080" fill-rule="evenodd"/>
<path d="M71.78 570.01 L73.14 567.89 L76.84 570.03 L75.69 572.26 L77.47 575.35 L79.97 575.46 L79.97 579.74 L77.47 579.85 L75.69 582.94 L76.84 585.17 L73.14 587.31 L71.78 585.19 L68.22 585.19 L66.86 587.31 L63.16 585.17 L64.31 582.94 L62.53 579.85 L60.03 579.74 L60.03 575.46 L62.53 575.35 L64.31 572.26 L63.16 570.03 L66.86 567.89 L68.22 570.01Z M74.00 577.60 A4.0 4.0 0 1 0 66.00 577.60 A4.0 4.0 0 1 0 74.00 577.60Z" fill="#808080" fill-rule="evenodd"/>
<path d="M71.78 598.01 L73.14 595.89 L76.84 598.03 L75.69 600.26 L77.47 603.35 L79.97 603.46 L79.97 607.74 L77.47 607.85 L75.69 610.94 L76.84 613.17 L73.14 615.31 L71.78 613.19 L68.22 613.19 L66.86 615.31 L63.16 613.17 L64.31 610.94 L62.53 607.85 L60.03 607.74 L60.03 603.46 L62.53 603.35 L64.31 600.26 L63.16 598.03 L66.86 595.89 L68.22 598.01Z M74.00 605.60 A4.0 4.0 0 1 0 66.00 605.60 A4.0 4.0 0 1 0 74.00 605.60Z" fill="#808080" fill-rule="evenodd"/>
<path d="M71.78 626.01 L73.14 623.89 L76.84 626.03 L75.69 628.26 L77.47 631.35 L79.97 631.46 L79.97 635.74 L77.47 635.85 L75.69 638.94 L76.84 641.17 L73.14 643.31 L71.78 641.19 L68.22 641.19 L66.86 643.31 L63.16 641.17 L64.31 638.94 L62.53 635.85 L60.03 635.74 L60.03 631.46 L62.53 631.35 L64.31 628.26 L63.16 626.03 L66.86 623.89 L68.22 626.01Z M74.00 633.60 A4.0 4.0 0 1 0 66.00 633.60 A4.0 4.0 0 1 0 74.00 633.60Z" fill="#808080" fill-rule="evenodd"/>
<path d="M71.78 654.01 L73.14 651.89 L76.84 654.03 L75.69 656.26 L77.47 659.35 L79.97 659.46 L79.97 663.74 L77.47 663.85 L75.69 666.94 L76.84 669.17 L73.14 671.31 L71.78 669.19 L68.22 669.19 L66.86 671.31 L63.16 669.17 L64.31 666.94 L62.53 663.85 L60.03 663.74 L60.03 659.46 L62.53 659.35 L64.31 656.26 L63.16 654.03 L66.86 651.89 L68.22 654.01Z M74.00 661.60 A4.0 4.0 0 1 0 66.00 661.60 A4.0 4.0 0 1 0 74.00 661.60Z" fill="#808080" fill-rule="evenodd"/>
<g fill="#d2d2d2"><rect x="1862.2" y="1001" width="7" height="1.9"/><path d="M1876 996 V1008.5 H1874 Q1868.2 1008.5 1868.2 1002 Q1868.2 996 1874 996Z"/><rect x="1874.5" y="995.2" width="2" height="14"/><rect x="1876" y="997.8" width="6" height="2.3"/><rect x="1876" y="1004" width="6" height="2.3"/><rect x="1887" y="995.2" width="2" height="14"/><path d="M1888.5 996 H1890 Q1896 996 1896 1002 Q1896 1008.5 1890 1008.5 H1888.5Z"/><rect x="1895" y="1001" width="7" height="1.9"/></g>
</svg>
</body></html>
